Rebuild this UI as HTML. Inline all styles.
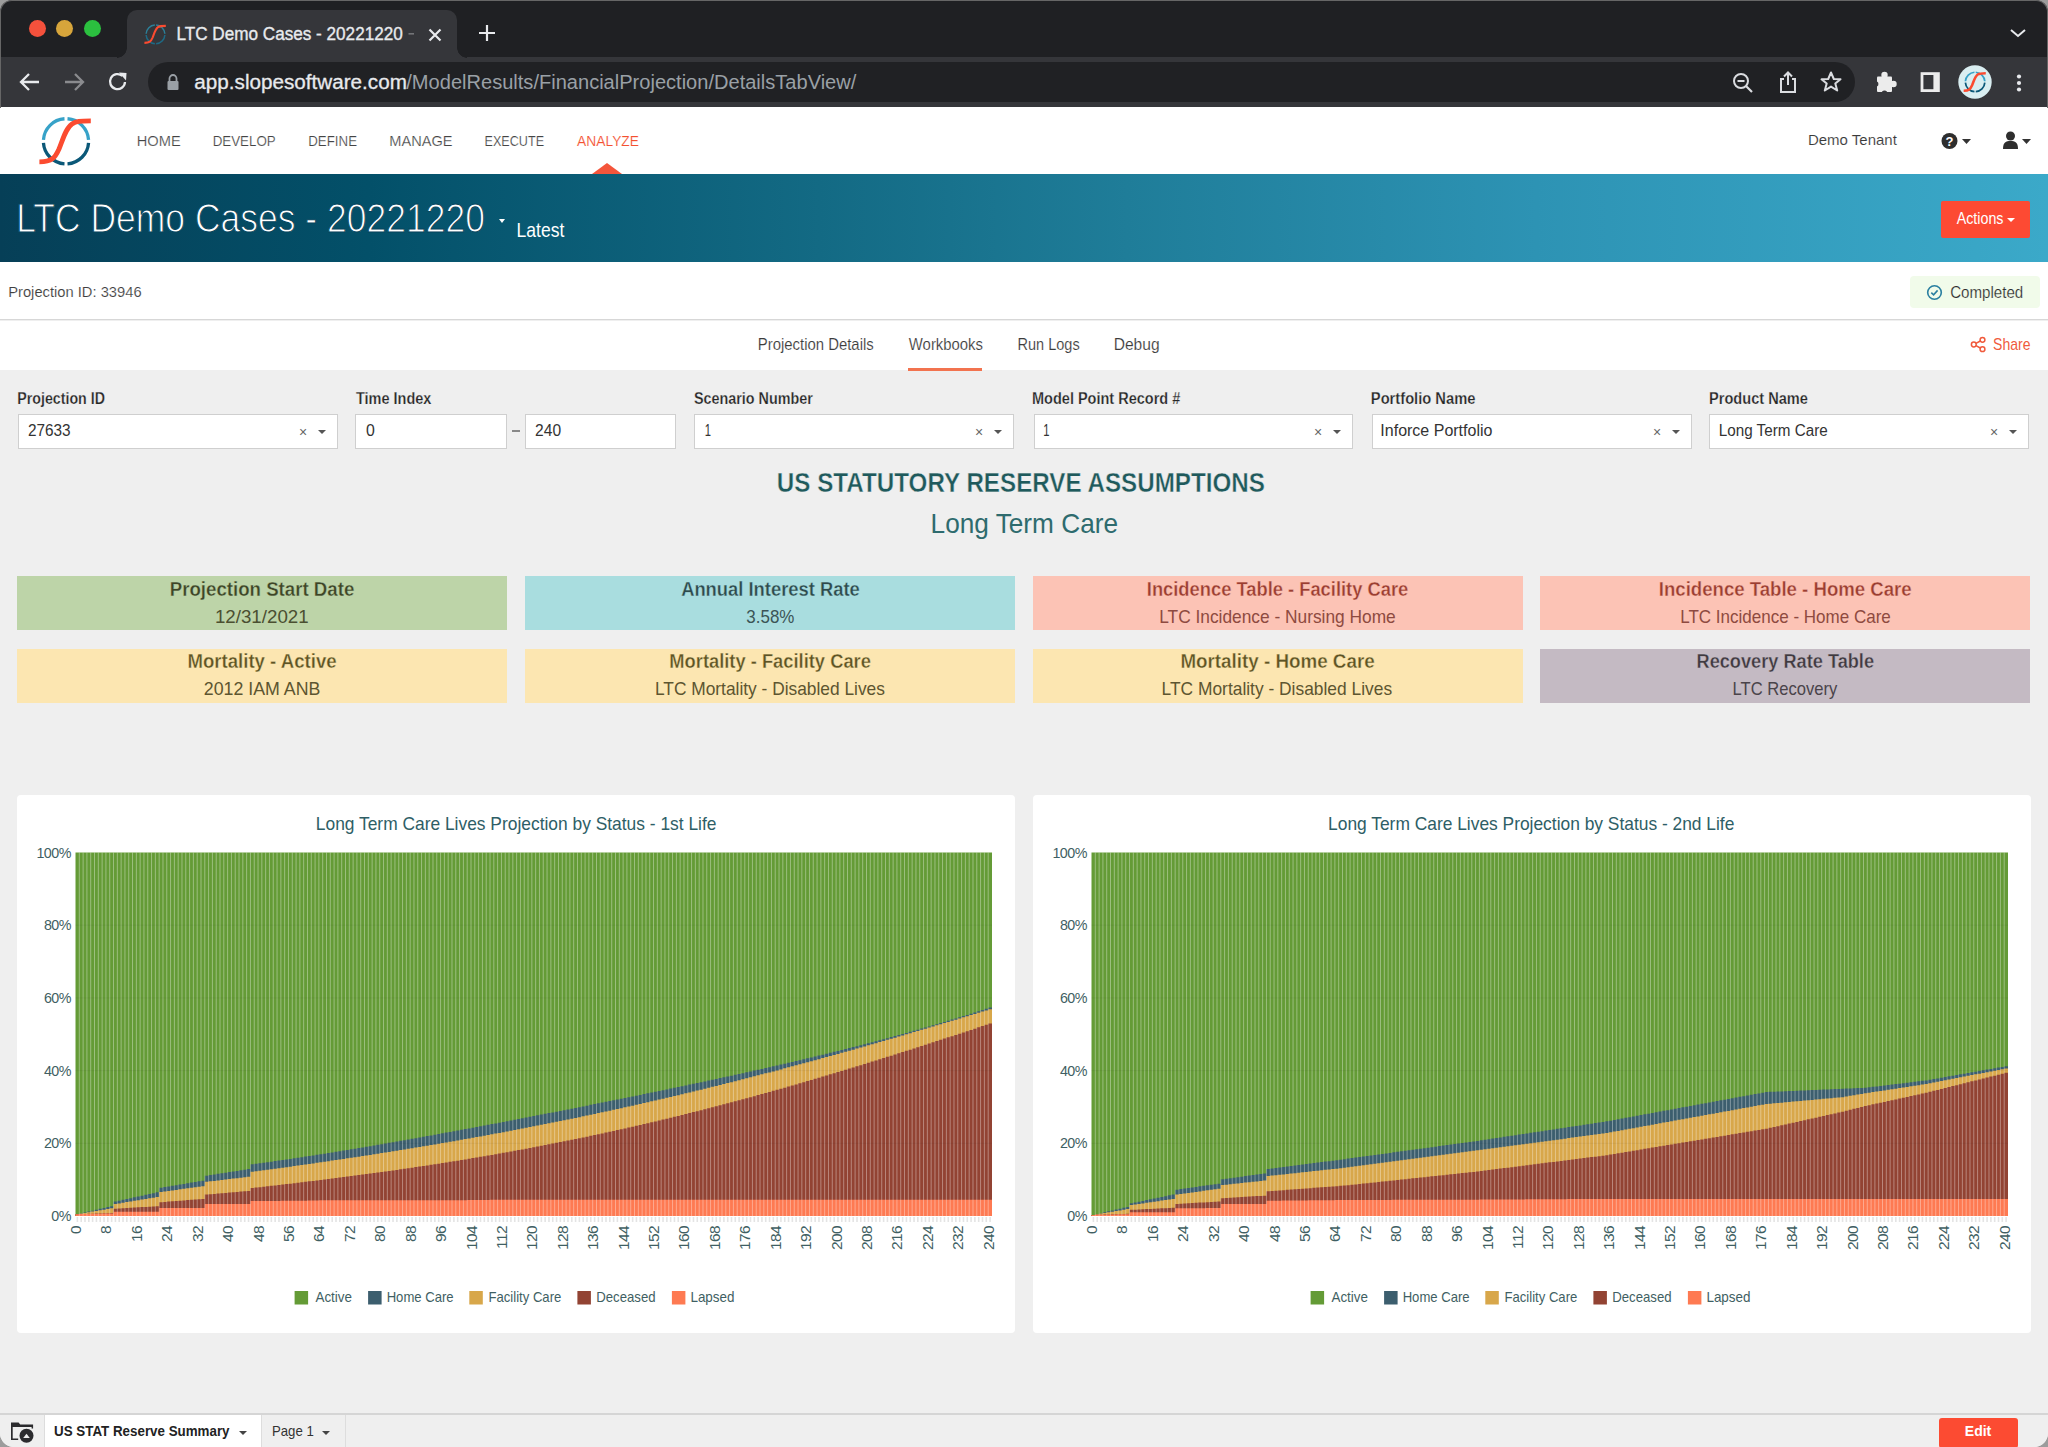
<!DOCTYPE html>
<html><head><meta charset="utf-8">
<style>
*{box-sizing:border-box;margin:0;padding:0}
html,body{width:2048px;height:1447px;overflow:hidden;background:#9c9c9c;font-family:"Liberation Sans",sans-serif}
.abs{position:absolute}
#win{position:absolute;left:0;top:0;width:2048px;height:1447px;border-radius:12px 12px 14px 14px;overflow:hidden;background:#efefef}
#frame{position:absolute;left:0;top:0;width:2048px;height:108px;border-radius:12px 12px 0 0;border:1px solid #666;border-bottom:none;pointer-events:none}
#tabstrip{position:absolute;left:0;top:0;width:2048px;height:57px;background:#1f2023}
#toolbar{position:absolute;left:0;top:57px;width:2048px;height:50px;background:#35363a}
.light{position:absolute;width:17px;height:17px;border-radius:50%;top:20px}
#tab{position:absolute;left:127px;top:10px;width:330px;height:48px;background:#35363a;border-radius:10px 10px 0 0}
#tab:before,#tab:after{content:"";position:absolute;bottom:0;width:10px;height:10px;background:radial-gradient(circle at 0 0,#1f2023 10px,#35363a 10.5px)}
#tab:before{left:-10px;background:radial-gradient(circle at 0 0,#1f2023 9.5px,#35363a 10px)}
#tab:after{right:-10px;background:radial-gradient(circle at 100% 0,#1f2023 9.5px,#35363a 10px)}
.tabtitle{position:absolute;left:50px;top:13px;font-size:17.5px;color:#e8eaed;white-space:nowrap;width:245px;overflow:hidden;-webkit-mask-image:linear-gradient(90deg,#000 85%,transparent 100%)}
#omni{position:absolute;left:148px;top:62px;width:1707px;height:40px;border-radius:20px;background:#202124}
.url{position:absolute;left:194px;top:70px;font-size:19.5px;color:#e8eaed;white-space:nowrap}
.url span{color:#9aa0a6}
#nav{position:absolute;left:0;top:107px;width:2048px;height:67px;background:#fff}
.navi{position:absolute;top:132px;font-size:15px;color:#4a4a4a;white-space:nowrap}
#banner{position:absolute;left:0;top:174px;width:2048px;height:88px;background:linear-gradient(90deg,#063f57 0%,#035069 18%,#136a84 40%,#1f7d99 55%,#2d93b4 75%,#3ba9c9 100%)}
#projrow{position:absolute;left:0;top:262px;width:2048px;height:58px;background:#fff;border-bottom:1px solid #d7d7d7}
#tabsrow{position:absolute;left:0;top:321px;width:2048px;height:49px;background:#fff}
.tabi{position:absolute;top:335px;font-size:15px;color:#404040;white-space:nowrap}
.flabel{position:absolute;top:389px;font-size:15px;font-weight:bold;color:#262626;white-space:nowrap;letter-spacing:-0.2px}
.finput{position:absolute;top:414px;height:35px;background:#fff;border:1px solid #cfcfcf;font-size:14px;color:#333;padding:9px 0 0 10px;white-space:nowrap}
.fx{position:absolute;top:9px;font-size:14px;color:#666}
.fcar{position:absolute;top:15px;width:0;height:0;border-left:4px solid transparent;border-right:4px solid transparent;border-top:4px solid #555}
.card{position:absolute;height:54px;text-align:center}
.card .t{position:absolute;left:0;right:0;top:3px;font-size:19.5px;font-weight:bold;white-space:nowrap;letter-spacing:-0.3px}
.card .v{position:absolute;left:0;right:0;top:31px;font-size:17px;white-space:nowrap}
.panel{position:absolute;top:795px;width:998px;height:538px;background:#fff;border-radius:4px}
#bottombar{position:absolute;left:0;top:1413px;width:2048px;height:34px;background:#efefef;border-top:2px solid #d5d5d5}
</style></head><body>
<div id="win">
  <div id="tabstrip"></div>
  <div id="toolbar"></div>
  <div class="light" style="left:29px;background:#f5513c"></div>
  <div class="light" style="left:56px;background:#d7a53b"></div>
  <div class="light" style="left:83.5px;background:#2bc03f"></div>
  <div id="tab">
    <svg class="abs" style="left:16px;top:12.5px" width="25" height="23.3" viewBox="0 0 60 56"><g fill="none" stroke-width="3.6"><path d="M7.45 25.80 A22.6 22.6 0 0 1 28.50 4.75" stroke="#2c7f98"/><path d="M31.50 4.75 A22.6 22.6 0 0 1 52.55 25.80" stroke="#2c7f98"/><path d="M52.55 28.80 A22.6 22.6 0 0 1 31.50 49.85" stroke="#1d6a85"/><path d="M28.50 49.85 A22.6 22.6 0 0 1 7.45 28.80" stroke="#1d6a85"/></g><path d="M3.4 47.8 C16 47.8 19 44 23 35 C27 25 30 14 36 10 C40 7.3 44 6.9 54.8 6.9" stroke="#fb4b30" stroke-width="5" fill="none"/></svg>
    
    <svg class="abs" style="left:300px;top:17px" width="16" height="16" viewBox="0 0 16 16"><path d="M2.5 2.5 L13.5 13.5 M13.5 2.5 L2.5 13.5" stroke="#e8eaed" stroke-width="2.2"/></svg>
  </div>
  <svg class="abs" style="left:477px;top:23px" width="20" height="20" viewBox="0 0 20 20"><path d="M10 2 V18 M2 10 H18" stroke="#e8eaed" stroke-width="2.2"/></svg>
  <svg class="abs" style="left:2009px;top:27px" width="18" height="12" viewBox="0 0 18 12"><path d="M2 3 L9 9 L16 3" stroke="#e8eaed" stroke-width="2" fill="none"/></svg>
  <!-- toolbar icons -->
  <svg class="abs" style="left:18px;top:71px" width="24" height="22" viewBox="0 0 24 22"><path d="M21 11 H4 M11 3 L3 11 L11 19" stroke="#e8eaed" stroke-width="2.3" fill="none"/></svg>
  <svg class="abs" style="left:62px;top:71px" width="24" height="22" viewBox="0 0 24 22"><path d="M3 11 H20 M13 3 L21 11 L13 19" stroke="#8a8b8e" stroke-width="2.3" fill="none"/></svg>
  <svg class="abs" style="left:106px;top:70px" width="24" height="24" viewBox="0 0 24 24"><path d="M19 12 A7.5 7.5 0 1 1 16.5 6" stroke="#e8eaed" stroke-width="2.3" fill="none"/><path d="M13 2.5 L20.5 3 L20 10.5 Z" fill="#e8eaed"/></svg>
  <div id="omni"></div>
  <svg class="abs" style="left:166px;top:73px" width="14" height="18" viewBox="0 0 14 18"><path d="M3.5 8 V5.5 A3.5 3.5 0 0 1 10.5 5.5 V8" stroke="#9aa0a6" stroke-width="1.8" fill="none"/><rect x="1.5" y="8" width="11" height="9" rx="1" fill="#9aa0a6"/></svg>
  
  <!-- omnibox right icons -->
  <svg class="abs" style="left:1731px;top:71px" width="24" height="24" viewBox="0 0 24 24"><circle cx="10" cy="10" r="7" stroke="#dadce0" stroke-width="2" fill="none"/><path d="M6.5 10 H13.5 M15 15 L21 21" stroke="#dadce0" stroke-width="2.2"/></svg>
  <svg class="abs" style="left:1777px;top:70px" width="22" height="24" viewBox="0 0 22 24"><path d="M7 9 H4 V22 H18 V9 H15 M11 15 V3 M7 6.5 L11 2.5 L15 6.5" stroke="#dadce0" stroke-width="2" fill="none"/></svg>
  <svg class="abs" style="left:1819px;top:70px" width="24" height="24" viewBox="0 0 24 24"><path d="M12 2.5 L14.8 9 L21.5 9.3 L16.3 13.6 L18.2 20.5 L12 16.6 L5.8 20.5 L7.7 13.6 L2.5 9.3 L9.2 9 Z" stroke="#dadce0" stroke-width="2" fill="none" stroke-linejoin="round"/></svg>
  <svg class="abs" style="left:1874px;top:70px" width="24" height="24" viewBox="0 0 24 24"><rect x="3" y="6.5" width="15" height="15.5" rx="1" fill="#ececec"/><circle cx="10.5" cy="5" r="3.2" fill="#ececec"/><circle cx="19.5" cy="14" r="3.2" fill="#ececec"/><circle cx="10.5" cy="23.3" r="2.8" fill="#35363a"/><circle cx="1.6" cy="14" r="2.8" fill="#35363a"/></svg>
  <svg class="abs" style="left:1919px;top:71px" width="22" height="22" viewBox="0 0 22 22"><rect x="1.6" y="1.2" width="19.2" height="19.8" fill="#ececec"/><rect x="4.4" y="4" width="10" height="14.2" fill="#35363a"/></svg>
  <svg class="abs" style="left:1958px;top:65px" width="34" height="34" viewBox="0 0 34 34"><circle cx="17" cy="17" r="16.7" fill="#d9eef1"/><g transform="translate(4.2,5.2) scale(0.43)"><g fill="none" stroke-width="4"><path d="M7.45 25.80 A22.6 22.6 0 0 1 28.50 4.75" stroke="#37a2c8"/><path d="M31.50 4.75 A22.6 22.6 0 0 1 52.55 25.80" stroke="#37a2c8"/><path d="M52.55 28.80 A22.6 22.6 0 0 1 31.50 49.85" stroke="#0b5878"/><path d="M28.50 49.85 A22.6 22.6 0 0 1 7.45 28.80" stroke="#0b5878"/></g><path d="M3.4 47.8 C16 47.8 19 44 23 35 C27 25 30 14 36 10 C40 7.3 44 6.9 54.8 6.9" stroke="#fb4b30" stroke-width="6" fill="none"/></g></svg>
  <svg class="abs" style="left:2014px;top:72px" width="10" height="22" viewBox="0 0 10 22"><circle cx="5" cy="4.5" r="2.1" fill="#e8eaed"/><circle cx="5" cy="11" r="2.1" fill="#e8eaed"/><circle cx="5" cy="17.5" r="2.1" fill="#e8eaed"/></svg>

  <!-- NAV -->
  <div id="nav"></div>
  <svg class="abs" style="left:36px;top:114px" width="60" height="56" viewBox="0 0 60 56"><g fill="none" stroke-width="3.3"><path d="M7.45 25.80 A22.6 22.6 0 0 1 28.50 4.75" stroke="#37a2c8"/><path d="M31.50 4.75 A22.6 22.6 0 0 1 52.55 25.80" stroke="#37a2c8"/><path d="M52.55 28.80 A22.6 22.6 0 0 1 31.50 49.85" stroke="#0b5878"/><path d="M28.50 49.85 A22.6 22.6 0 0 1 7.45 28.80" stroke="#0b5878"/></g><path d="M3.4 47.8 C16 47.8 19 44 23 35 C27 25 30 14 36 10 C40 7.3 44 6.9 54.8 6.9" stroke="#fb4b30" stroke-width="4.8" fill="none"/></svg>
  
  
  
  
  
  
  <div class="abs" style="left:592px;top:163px;width:0;height:0;border-left:15px solid transparent;border-right:15px solid transparent;border-bottom:11px solid #f4553b"></div>
  
  <svg class="abs" style="left:1941px;top:132px" width="32" height="18" viewBox="0 0 32 18"><circle cx="8.5" cy="9" r="8" fill="#2e2e2e"/><text x="8.5" y="13.8" font-size="13" font-weight="bold" fill="#fff" text-anchor="middle" font-family="Liberation Sans">?</text><path d="M21 7 H30 L25.5 12 Z" fill="#333"/></svg>
  <svg class="abs" style="left:2002px;top:131px" width="32" height="19" viewBox="0 0 32 19"><circle cx="8.5" cy="5" r="4.5" fill="#2e2e2e"/><path d="M1 18 C1 11 4 10 8.5 10 C13 10 16 11 16 18 Z" fill="#2e2e2e"/><path d="M20 8 H29 L24.5 13 Z" fill="#333"/></svg>

  <!-- BANNER -->
  <div id="banner"></div>
  
  <div class="abs" style="left:498.5px;top:219px;width:0;height:0;border-left:3.5px solid transparent;border-right:3.5px solid transparent;border-top:4px solid #fff"></div>
  
  <div class="abs" style="left:1941px;top:200.5px;width:89px;height:37px;background:#fd4a33;border-radius:2px"></div>
  
  <div class="abs" style="left:2007px;top:218px;width:0;height:0;border-left:4px solid transparent;border-right:4px solid transparent;border-top:4px solid #fff"></div>

  <!-- PROJECTION ROW -->
  <div id="projrow"></div>
  
  <div class="abs" style="left:1909.5px;top:275.5px;width:130.5px;height:32px;background:#f1fbea;border-radius:4px"></div>
  <svg class="abs" style="left:1926px;top:284px" width="17" height="17" viewBox="0 0 17 17"><circle cx="8.5" cy="8.5" r="6.8" stroke="#2a7fa0" stroke-width="1.6" fill="none"/><path d="M5.3 8.6 L7.6 10.8 L11.6 6.4" stroke="#2a7fa0" stroke-width="1.6" fill="none"/></svg>
  

  <!-- TABS -->
  <div id="tabsrow"></div>
  
  
  
  
  <div class="abs" style="left:908px;top:368px;width:74px;height:2.5px;background:#f2734f"></div>
  <svg class="abs" style="left:1970px;top:336px" width="17" height="17" viewBox="0 0 17 17"><g stroke="#f05a3c" stroke-width="1.5" fill="none"><circle cx="12.5" cy="3.8" r="2.4"/><circle cx="3.8" cy="8.5" r="2.4"/><circle cx="12.5" cy="13.2" r="2.4"/><path d="M6 7.3 L10.3 5 M6 9.7 L10.3 12"/></g></svg>
  

  <!-- FILTERS -->
  <div class="finput" style="left:18px;width:320px"><span class="fx" style="left:280px">&#215;</span><span class="fcar" style="left:299px"></span></div>
  <div class="finput" style="left:694px;width:320px"><span class="fx" style="left:280px">&#215;</span><span class="fcar" style="left:299px"></span></div>
  <div class="finput" style="left:1034px;width:319px"><span class="fx" style="left:279px">&#215;</span><span class="fcar" style="left:298px"></span></div>
  <div class="finput" style="left:1372px;width:320px"><span class="fx" style="left:280px">&#215;</span><span class="fcar" style="left:299px"></span></div>
  <div class="finput" style="left:1709px;width:320px"><span class="fx" style="left:280px">&#215;</span><span class="fcar" style="left:299px"></span></div>
  <div class="finput" style="left:355px;width:152px"></div>
  <div class="abs" style="left:512px;top:430px;width:8px;height:1.5px;background:#888"></div>
  <div class="finput" style="left:525px;width:151px"></div>

  <!-- HEADINGS -->
  
  

  <!-- CARDS -->
  <div class="card" style="left:17px;top:576px;width:490px;background:#bdd4a8"></div>
  <div class="card" style="left:525px;top:576px;width:490px;background:#a9dddf"></div>
  <div class="card" style="left:1033px;top:576px;width:490px;background:#fcc3b5"></div>
  <div class="card" style="left:1540px;top:576px;width:490px;background:#fcc3b5"></div>
  <div class="card" style="left:17px;top:648.5px;width:490px;background:#fce6b1"></div>
  <div class="card" style="left:525px;top:648.5px;width:490px;background:#fce6b1"></div>
  <div class="card" style="left:1033px;top:648.5px;width:490px;background:#fce6b1"></div>
  <div class="card" style="left:1540px;top:648.5px;width:490px;background:#c4bac3"></div>

  <!-- CHARTS -->
  <div class="panel" style="left:17px"></div>
  <div class="panel" style="left:1033px"></div>
  <svg class="abs" style="left:17px;top:795px" width="998" height="538" viewBox="17 795 998 538">
<rect x="75.5" y="852.5" width="916.5" height="363.5" fill="#649b36"/>
<polygon fill="#3c5e6e" points="75.50,1214.18 79.30,1214.18 79.30,1213.29 83.11,1213.29 83.11,1212.41 86.91,1212.41 86.91,1211.52 90.71,1211.52 90.71,1210.63 94.51,1210.63 94.51,1209.74 98.32,1209.74 98.32,1208.85 102.12,1208.85 102.12,1207.96 105.92,1207.96 105.92,1207.07 109.73,1207.07 109.73,1206.19 113.53,1206.19 113.53,1201.46 117.33,1201.46 117.33,1200.63 121.13,1200.63 121.13,1199.81 124.94,1199.81 124.94,1198.98 128.74,1198.98 128.74,1198.16 132.54,1198.16 132.54,1197.33 136.35,1197.33 136.35,1196.50 140.15,1196.50 140.15,1195.68 143.95,1195.68 143.95,1194.85 147.76,1194.85 147.76,1194.02 151.56,1194.02 151.56,1193.20 155.36,1193.20 155.36,1192.37 159.16,1192.37 159.16,1187.65 162.97,1187.65 162.97,1187.02 166.77,1187.02 166.77,1186.39 170.57,1186.39 170.57,1185.76 174.38,1185.76 174.38,1185.14 178.18,1185.14 178.18,1184.51 181.98,1184.51 181.98,1183.88 185.78,1183.88 185.78,1183.25 189.59,1183.25 189.59,1182.62 193.39,1182.62 193.39,1182.00 197.19,1182.00 197.19,1181.37 201.00,1181.37 201.00,1180.74 204.80,1180.74 204.80,1175.65 208.60,1175.65 208.60,1175.06 212.40,1175.06 212.40,1174.46 216.21,1174.46 216.21,1173.87 220.01,1173.87 220.01,1173.27 223.81,1173.27 223.81,1172.68 227.62,1172.68 227.62,1172.08 231.42,1172.08 231.42,1171.49 235.22,1171.49 235.22,1170.89 239.02,1170.89 239.02,1170.30 242.83,1170.30 242.83,1169.70 246.63,1169.70 246.63,1169.11 250.43,1169.11 250.43,1164.24 254.24,1164.24 254.24,1163.73 258.04,1163.73 258.04,1163.22 261.84,1163.22 261.84,1162.69 265.65,1162.69 265.65,1162.17 269.45,1162.17 269.45,1161.64 273.25,1161.64 273.25,1161.10 277.05,1161.10 277.05,1160.55 280.86,1160.55 280.86,1160.01 284.66,1160.01 284.66,1159.45 288.46,1159.45 288.46,1158.89 292.27,1158.89 292.27,1158.33 296.07,1158.33 296.07,1157.76 299.87,1157.76 299.87,1157.19 303.67,1157.19 303.67,1156.61 307.48,1156.61 307.48,1156.02 311.28,1156.02 311.28,1155.43 315.08,1155.43 315.08,1154.84 318.89,1154.84 318.89,1154.24 322.69,1154.24 322.69,1153.64 326.49,1153.64 326.49,1153.04 330.29,1153.04 330.29,1152.43 334.10,1152.43 334.10,1151.81 337.90,1151.81 337.90,1151.20 341.70,1151.20 341.70,1150.58 345.51,1150.58 345.51,1149.95 349.31,1149.95 349.31,1149.32 353.11,1149.32 353.11,1148.69 356.91,1148.69 356.91,1148.05 360.72,1148.05 360.72,1147.41 364.52,1147.41 364.52,1146.77 368.32,1146.77 368.32,1146.13 372.13,1146.13 372.13,1145.48 375.93,1145.48 375.93,1144.82 379.73,1144.82 379.73,1144.17 383.54,1144.17 383.54,1143.51 387.34,1143.51 387.34,1142.85 391.14,1142.85 391.14,1142.18 394.94,1142.18 394.94,1141.52 398.75,1141.52 398.75,1140.85 402.55,1140.85 402.55,1140.18 406.35,1140.18 406.35,1139.50 410.16,1139.50 410.16,1138.82 413.96,1138.82 413.96,1138.14 417.76,1138.14 417.76,1137.46 421.56,1137.46 421.56,1136.78 425.37,1136.78 425.37,1136.09 429.17,1136.09 429.17,1135.40 432.97,1135.40 432.97,1134.71 436.78,1134.71 436.78,1134.01 440.58,1134.01 440.58,1133.32 444.38,1133.32 444.38,1132.62 448.18,1132.62 448.18,1131.92 451.99,1131.92 451.99,1131.22 455.79,1131.22 455.79,1130.51 459.59,1130.51 459.59,1129.81 463.40,1129.81 463.40,1129.10 467.20,1129.10 467.20,1128.39 471.00,1128.39 471.00,1127.68 474.80,1127.68 474.80,1126.97 478.61,1126.97 478.61,1126.25 482.41,1126.25 482.41,1125.54 486.21,1125.54 486.21,1124.82 490.02,1124.82 490.02,1124.10 493.82,1124.10 493.82,1123.38 497.62,1123.38 497.62,1122.65 501.43,1122.65 501.43,1121.93 505.23,1121.93 505.23,1121.20 509.03,1121.20 509.03,1120.48 512.83,1120.48 512.83,1119.75 516.64,1119.75 516.64,1119.02 520.44,1119.02 520.44,1118.29 524.24,1118.29 524.24,1117.55 528.05,1117.55 528.05,1116.82 531.85,1116.82 531.85,1116.08 535.65,1116.08 535.65,1115.34 539.45,1115.34 539.45,1114.60 543.26,1114.60 543.26,1113.86 547.06,1113.86 547.06,1113.12 550.86,1113.12 550.86,1112.38 554.67,1112.38 554.67,1111.63 558.47,1111.63 558.47,1110.89 562.27,1110.89 562.27,1110.14 566.07,1110.14 566.07,1109.39 569.88,1109.39 569.88,1108.64 573.68,1108.64 573.68,1107.89 577.48,1107.89 577.48,1107.14 581.29,1107.14 581.29,1106.38 585.09,1106.38 585.09,1105.63 588.89,1105.63 588.89,1104.87 592.70,1104.87 592.70,1104.11 596.50,1104.11 596.50,1103.35 600.30,1103.35 600.30,1102.59 604.10,1102.59 604.10,1101.83 607.91,1101.83 607.91,1101.07 611.71,1101.07 611.71,1100.30 615.51,1100.30 615.51,1099.53 619.32,1099.53 619.32,1098.76 623.12,1098.76 623.12,1097.99 626.92,1097.99 626.92,1097.22 630.72,1097.22 630.72,1096.45 634.53,1096.45 634.53,1095.67 638.33,1095.67 638.33,1094.90 642.13,1094.90 642.13,1094.12 645.94,1094.12 645.94,1093.34 649.74,1093.34 649.74,1092.55 653.54,1092.55 653.54,1091.77 657.34,1091.77 657.34,1090.98 661.15,1090.98 661.15,1090.20 664.95,1090.20 664.95,1089.41 668.75,1089.41 668.75,1088.61 672.56,1088.61 672.56,1087.82 676.36,1087.82 676.36,1087.03 680.16,1087.03 680.16,1086.23 683.96,1086.23 683.96,1085.43 687.77,1085.43 687.77,1084.62 691.57,1084.62 691.57,1083.82 695.37,1083.82 695.37,1083.01 699.18,1083.01 699.18,1082.20 702.98,1082.20 702.98,1081.39 706.78,1081.39 706.78,1080.58 710.59,1080.58 710.59,1079.76 714.39,1079.76 714.39,1078.94 718.19,1078.94 718.19,1078.12 721.99,1078.12 721.99,1077.30 725.80,1077.30 725.80,1076.47 729.60,1076.47 729.60,1075.64 733.40,1075.64 733.40,1074.81 737.21,1074.81 737.21,1073.97 741.01,1073.97 741.01,1073.13 744.81,1073.13 744.81,1072.29 748.61,1072.29 748.61,1071.44 752.42,1071.44 752.42,1070.59 756.22,1070.59 756.22,1069.74 760.02,1069.74 760.02,1068.89 763.83,1068.89 763.83,1068.03 767.63,1068.03 767.63,1067.17 771.43,1067.17 771.43,1066.30 775.23,1066.30 775.23,1065.43 779.04,1065.43 779.04,1064.56 782.84,1064.56 782.84,1063.68 786.64,1063.68 786.64,1062.80 790.45,1062.80 790.45,1061.91 794.25,1061.91 794.25,1061.02 798.05,1061.02 798.05,1060.13 801.85,1060.13 801.85,1059.23 805.66,1059.23 805.66,1058.32 809.46,1058.32 809.46,1057.42 813.26,1057.42 813.26,1056.50 817.07,1056.50 817.07,1055.59 820.87,1055.59 820.87,1054.67 824.67,1054.67 824.67,1053.74 828.48,1053.74 828.48,1052.81 832.28,1052.81 832.28,1051.87 836.08,1051.87 836.08,1050.93 839.88,1050.93 839.88,1049.98 843.69,1049.98 843.69,1049.03 847.49,1049.03 847.49,1048.07 851.29,1048.07 851.29,1047.10 855.10,1047.10 855.10,1046.13 858.90,1046.13 858.90,1045.16 862.70,1045.16 862.70,1044.17 866.50,1044.17 866.50,1043.18 870.31,1043.18 870.31,1042.19 874.11,1042.19 874.11,1041.19 877.91,1041.19 877.91,1040.18 881.72,1040.18 881.72,1039.17 885.52,1039.17 885.52,1038.14 889.32,1038.14 889.32,1037.12 893.12,1037.12 893.12,1036.08 896.93,1036.08 896.93,1035.04 900.73,1035.04 900.73,1033.99 904.53,1033.99 904.53,1032.93 908.34,1032.93 908.34,1031.87 912.14,1031.87 912.14,1030.79 915.94,1030.79 915.94,1029.71 919.74,1029.71 919.74,1028.62 923.55,1028.62 923.55,1027.53 927.35,1027.53 927.35,1026.42 931.15,1026.42 931.15,1025.31 934.96,1025.31 934.96,1024.19 938.76,1024.19 938.76,1023.06 942.56,1023.06 942.56,1021.92 946.37,1021.92 946.37,1020.77 950.17,1020.77 950.17,1019.61 953.97,1019.61 953.97,1018.44 957.77,1018.44 957.77,1017.26 961.58,1017.26 961.58,1016.08 965.38,1016.08 965.38,1014.88 969.18,1014.88 969.18,1013.68 972.99,1013.68 972.99,1012.46 976.79,1012.46 976.79,1011.23 980.59,1011.23 980.59,1010.00 984.39,1010.00 984.39,1008.75 988.20,1008.75 988.20,1007.49 992.00,1007.49 992.00,1216.00 75.50,1216.00"/>
<polygon fill="#d8a74a" points="75.50,1214.18 79.30,1214.18 79.30,1213.54 83.11,1213.54 83.11,1212.89 86.91,1212.89 86.91,1212.24 90.71,1212.24 90.71,1211.60 94.51,1211.60 94.51,1210.95 98.32,1210.95 98.32,1210.31 102.12,1210.31 102.12,1209.66 105.92,1209.66 105.92,1209.01 109.73,1209.01 109.73,1208.37 113.53,1208.37 113.53,1204.00 117.33,1204.00 117.33,1203.38 121.13,1203.38 121.13,1202.75 124.94,1202.75 124.94,1202.12 128.74,1202.12 128.74,1201.49 132.54,1201.49 132.54,1200.87 136.35,1200.87 136.35,1200.24 140.15,1200.24 140.15,1199.61 143.95,1199.61 143.95,1198.98 147.76,1198.98 147.76,1198.35 151.56,1198.35 151.56,1197.73 155.36,1197.73 155.36,1197.10 159.16,1197.10 159.16,1192.01 162.97,1192.01 162.97,1191.48 166.77,1191.48 166.77,1190.95 170.57,1190.95 170.57,1190.42 174.38,1190.42 174.38,1189.89 178.18,1189.89 178.18,1189.37 181.98,1189.37 181.98,1188.84 185.78,1188.84 185.78,1188.31 189.59,1188.31 189.59,1187.78 193.39,1187.78 193.39,1187.25 197.19,1187.25 197.19,1186.72 201.00,1186.72 201.00,1186.19 204.80,1186.19 204.80,1181.83 208.60,1181.83 208.60,1181.37 212.40,1181.37 212.40,1180.91 216.21,1180.91 216.21,1180.44 220.01,1180.44 220.01,1179.98 223.81,1179.98 223.81,1179.52 227.62,1179.52 227.62,1179.06 231.42,1179.06 231.42,1178.59 235.22,1178.59 235.22,1178.13 239.02,1178.13 239.02,1177.67 242.83,1177.67 242.83,1177.20 246.63,1177.20 246.63,1176.74 250.43,1176.74 250.43,1171.85 254.24,1171.85 254.24,1171.33 258.04,1171.33 258.04,1170.82 261.84,1170.82 261.84,1170.30 265.65,1170.30 265.65,1169.78 269.45,1169.78 269.45,1169.26 273.25,1169.26 273.25,1168.74 277.05,1168.74 277.05,1168.21 280.86,1168.21 280.86,1167.69 284.66,1167.69 284.66,1167.16 288.46,1167.16 288.46,1166.63 292.27,1166.63 292.27,1166.09 296.07,1166.09 296.07,1165.56 299.87,1165.56 299.87,1165.02 303.67,1165.02 303.67,1164.48 307.48,1164.48 307.48,1163.93 311.28,1163.93 311.28,1163.39 315.08,1163.39 315.08,1162.84 318.89,1162.84 318.89,1162.29 322.69,1162.29 322.69,1161.74 326.49,1161.74 326.49,1161.18 330.29,1161.18 330.29,1160.62 334.10,1160.62 334.10,1160.06 337.90,1160.06 337.90,1159.50 341.70,1159.50 341.70,1158.93 345.51,1158.93 345.51,1158.36 349.31,1158.36 349.31,1157.79 353.11,1157.79 353.11,1157.21 356.91,1157.21 356.91,1156.63 360.72,1156.63 360.72,1156.05 364.52,1156.05 364.52,1155.47 368.32,1155.47 368.32,1154.88 372.13,1154.88 372.13,1154.29 375.93,1154.29 375.93,1153.69 379.73,1153.69 379.73,1153.10 383.54,1153.10 383.54,1152.50 387.34,1152.50 387.34,1151.89 391.14,1151.89 391.14,1151.29 394.94,1151.29 394.94,1150.68 398.75,1150.68 398.75,1150.07 402.55,1150.07 402.55,1149.45 406.35,1149.45 406.35,1148.83 410.16,1148.83 410.16,1148.21 413.96,1148.21 413.96,1147.58 417.76,1147.58 417.76,1146.95 421.56,1146.95 421.56,1146.32 425.37,1146.32 425.37,1145.68 429.17,1145.68 429.17,1145.04 432.97,1145.04 432.97,1144.40 436.78,1144.40 436.78,1143.75 440.58,1143.75 440.58,1143.10 444.38,1143.10 444.38,1142.45 448.18,1142.45 448.18,1141.79 451.99,1141.79 451.99,1141.13 455.79,1141.13 455.79,1140.46 459.59,1140.46 459.59,1139.79 463.40,1139.79 463.40,1139.12 467.20,1139.12 467.20,1138.44 471.00,1138.44 471.00,1137.76 474.80,1137.76 474.80,1137.08 478.61,1137.08 478.61,1136.39 482.41,1136.39 482.41,1135.70 486.21,1135.70 486.21,1135.01 490.02,1135.01 490.02,1134.31 493.82,1134.31 493.82,1133.60 497.62,1133.60 497.62,1132.90 501.43,1132.90 501.43,1132.19 505.23,1132.19 505.23,1131.47 509.03,1131.47 509.03,1130.75 512.83,1130.75 512.83,1130.03 516.64,1130.03 516.64,1129.30 520.44,1129.30 520.44,1128.57 524.24,1128.57 524.24,1127.84 528.05,1127.84 528.05,1127.10 531.85,1127.10 531.85,1126.36 535.65,1126.36 535.65,1125.61 539.45,1125.61 539.45,1124.86 543.26,1124.86 543.26,1124.11 547.06,1124.11 547.06,1123.35 550.86,1123.35 550.86,1122.59 554.67,1122.59 554.67,1121.82 558.47,1121.82 558.47,1121.05 562.27,1121.05 562.27,1120.28 566.07,1120.28 566.07,1119.50 569.88,1119.50 569.88,1118.71 573.68,1118.71 573.68,1117.93 577.48,1117.93 577.48,1117.14 581.29,1117.14 581.29,1116.34 585.09,1116.34 585.09,1115.54 588.89,1115.54 588.89,1114.74 592.70,1114.74 592.70,1113.93 596.50,1113.93 596.50,1113.12 600.30,1113.12 600.30,1112.30 604.10,1112.30 604.10,1111.48 607.91,1111.48 607.91,1110.66 611.71,1110.66 611.71,1109.83 615.51,1109.83 615.51,1109.00 619.32,1109.00 619.32,1108.16 623.12,1108.16 623.12,1107.32 626.92,1107.32 626.92,1106.48 630.72,1106.48 630.72,1105.63 634.53,1105.63 634.53,1104.78 638.33,1104.78 638.33,1103.92 642.13,1103.92 642.13,1103.06 645.94,1103.06 645.94,1102.19 649.74,1102.19 649.74,1101.33 653.54,1101.33 653.54,1100.45 657.34,1100.45 657.34,1099.57 661.15,1099.57 661.15,1098.69 664.95,1098.69 664.95,1097.81 668.75,1097.81 668.75,1096.92 672.56,1096.92 672.56,1096.02 676.36,1096.02 676.36,1095.13 680.16,1095.13 680.16,1094.22 683.96,1094.22 683.96,1093.32 687.77,1093.32 687.77,1092.41 691.57,1092.41 691.57,1091.49 695.37,1091.49 695.37,1090.57 699.18,1090.57 699.18,1089.65 702.98,1089.65 702.98,1088.73 706.78,1088.73 706.78,1087.80 710.59,1087.80 710.59,1086.86 714.39,1086.86 714.39,1085.92 718.19,1085.92 718.19,1084.98 721.99,1084.98 721.99,1084.03 725.80,1084.03 725.80,1083.08 729.60,1083.08 729.60,1082.13 733.40,1082.13 733.40,1081.17 737.21,1081.17 737.21,1080.21 741.01,1080.21 741.01,1079.24 744.81,1079.24 744.81,1078.27 748.61,1078.27 748.61,1077.30 752.42,1077.30 752.42,1076.32 756.22,1076.32 756.22,1075.34 760.02,1075.34 760.02,1074.36 763.83,1074.36 763.83,1073.37 767.63,1073.37 767.63,1072.38 771.43,1072.38 771.43,1071.38 775.23,1071.38 775.23,1070.38 779.04,1070.38 779.04,1069.38 782.84,1069.38 782.84,1068.37 786.64,1068.37 786.64,1067.36 790.45,1067.36 790.45,1066.34 794.25,1066.34 794.25,1065.32 798.05,1065.32 798.05,1064.30 801.85,1064.30 801.85,1063.28 805.66,1063.28 805.66,1062.25 809.46,1062.25 809.46,1061.21 813.26,1061.21 813.26,1060.18 817.07,1060.18 817.07,1059.14 820.87,1059.14 820.87,1058.10 824.67,1058.10 824.67,1057.05 828.48,1057.05 828.48,1056.00 832.28,1056.00 832.28,1054.95 836.08,1054.95 836.08,1053.89 839.88,1053.89 839.88,1052.83 843.69,1052.83 843.69,1051.77 847.49,1051.77 847.49,1050.70 851.29,1050.70 851.29,1049.63 855.10,1049.63 855.10,1048.56 858.90,1048.56 858.90,1047.48 862.70,1047.48 862.70,1046.40 866.50,1046.40 866.50,1045.32 870.31,1045.32 870.31,1044.24 874.11,1044.24 874.11,1043.15 877.91,1043.15 877.91,1042.06 881.72,1042.06 881.72,1040.96 885.52,1040.96 885.52,1039.87 889.32,1039.87 889.32,1038.77 893.12,1038.77 893.12,1037.66 896.93,1037.66 896.93,1036.56 900.73,1036.56 900.73,1035.45 904.53,1035.45 904.53,1034.34 908.34,1034.34 908.34,1033.22 912.14,1033.22 912.14,1032.11 915.94,1032.11 915.94,1030.99 919.74,1030.99 919.74,1029.87 923.55,1029.87 923.55,1028.74 927.35,1028.74 927.35,1027.62 931.15,1027.62 931.15,1026.49 934.96,1026.49 934.96,1025.35 938.76,1025.35 938.76,1024.22 942.56,1024.22 942.56,1023.08 946.37,1023.08 946.37,1021.94 950.17,1021.94 950.17,1020.80 953.97,1020.80 953.97,1019.66 957.77,1019.66 957.77,1018.51 961.58,1018.51 961.58,1017.37 965.38,1017.37 965.38,1016.22 969.18,1016.22 969.18,1015.07 972.99,1015.07 972.99,1013.91 976.79,1013.91 976.79,1012.76 980.59,1012.76 980.59,1011.60 984.39,1011.60 984.39,1010.44 988.20,1010.44 988.20,1009.28 992.00,1009.28 992.00,1216.00 75.50,1216.00"/>
<polygon fill="#924333" points="75.50,1214.18 79.30,1214.18 79.30,1214.06 83.11,1214.06 83.11,1213.94 86.91,1213.94 86.91,1213.82 90.71,1213.82 90.71,1213.70 94.51,1213.70 94.51,1213.58 98.32,1213.58 98.32,1213.46 102.12,1213.46 102.12,1213.33 105.92,1213.33 105.92,1213.21 109.73,1213.21 109.73,1213.09 113.53,1213.09 113.53,1208.73 117.33,1208.73 117.33,1208.50 121.13,1208.50 121.13,1208.27 124.94,1208.27 124.94,1208.04 128.74,1208.04 128.74,1207.80 132.54,1207.80 132.54,1207.57 136.35,1207.57 136.35,1207.34 140.15,1207.34 140.15,1207.11 143.95,1207.11 143.95,1206.88 147.76,1206.88 147.76,1206.65 151.56,1206.65 151.56,1206.42 155.36,1206.42 155.36,1206.19 159.16,1206.19 159.16,1202.19 162.97,1202.19 162.97,1201.89 166.77,1201.89 166.77,1201.59 170.57,1201.59 170.57,1201.29 174.38,1201.29 174.38,1201.00 178.18,1201.00 178.18,1200.70 181.98,1200.70 181.98,1200.40 185.78,1200.40 185.78,1200.11 189.59,1200.11 189.59,1199.81 193.39,1199.81 193.39,1199.51 197.19,1199.51 197.19,1199.21 201.00,1199.21 201.00,1198.92 204.80,1198.92 204.80,1194.55 208.60,1194.55 208.60,1194.22 212.40,1194.22 212.40,1193.89 216.21,1193.89 216.21,1193.56 220.01,1193.56 220.01,1193.23 223.81,1193.23 223.81,1192.90 227.62,1192.90 227.62,1192.57 231.42,1192.57 231.42,1192.24 235.22,1192.24 235.22,1191.91 239.02,1191.91 239.02,1191.58 242.83,1191.58 242.83,1191.25 246.63,1191.25 246.63,1190.92 250.43,1190.92 250.43,1187.99 254.24,1187.99 254.24,1187.56 258.04,1187.56 258.04,1187.13 261.84,1187.13 261.84,1186.70 265.65,1186.70 265.65,1186.27 269.45,1186.27 269.45,1185.83 273.25,1185.83 273.25,1185.40 277.05,1185.40 277.05,1184.96 280.86,1184.96 280.86,1184.52 284.66,1184.52 284.66,1184.07 288.46,1184.07 288.46,1183.63 292.27,1183.63 292.27,1183.18 296.07,1183.18 296.07,1182.73 299.87,1182.73 299.87,1182.27 303.67,1182.27 303.67,1181.82 307.48,1181.82 307.48,1181.36 311.28,1181.36 311.28,1180.89 315.08,1180.89 315.08,1180.43 318.89,1180.43 318.89,1179.96 322.69,1179.96 322.69,1179.49 326.49,1179.49 326.49,1179.02 330.29,1179.02 330.29,1178.54 334.10,1178.54 334.10,1178.06 337.90,1178.06 337.90,1177.58 341.70,1177.58 341.70,1177.09 345.51,1177.09 345.51,1176.60 349.31,1176.60 349.31,1176.10 353.11,1176.10 353.11,1175.61 356.91,1175.61 356.91,1175.10 360.72,1175.10 360.72,1174.60 364.52,1174.60 364.52,1174.09 368.32,1174.09 368.32,1173.58 372.13,1173.58 372.13,1173.06 375.93,1173.06 375.93,1172.54 379.73,1172.54 379.73,1172.02 383.54,1172.02 383.54,1171.49 387.34,1171.49 387.34,1170.96 391.14,1170.96 391.14,1170.42 394.94,1170.42 394.94,1169.88 398.75,1169.88 398.75,1169.34 402.55,1169.34 402.55,1168.79 406.35,1168.79 406.35,1168.23 410.16,1168.23 410.16,1167.68 413.96,1167.68 413.96,1167.11 417.76,1167.11 417.76,1166.55 421.56,1166.55 421.56,1165.98 425.37,1165.98 425.37,1165.40 429.17,1165.40 429.17,1164.82 432.97,1164.82 432.97,1164.24 436.78,1164.24 436.78,1163.65 440.58,1163.65 440.58,1163.05 444.38,1163.05 444.38,1162.45 448.18,1162.45 448.18,1161.85 451.99,1161.85 451.99,1161.24 455.79,1161.24 455.79,1160.63 459.59,1160.63 459.59,1160.01 463.40,1160.01 463.40,1159.39 467.20,1159.39 467.20,1158.76 471.00,1158.76 471.00,1158.12 474.80,1158.12 474.80,1157.49 478.61,1157.49 478.61,1156.84 482.41,1156.84 482.41,1156.19 486.21,1156.19 486.21,1155.54 490.02,1155.54 490.02,1154.88 493.82,1154.88 493.82,1154.22 497.62,1154.22 497.62,1153.55 501.43,1153.55 501.43,1152.87 505.23,1152.87 505.23,1152.19 509.03,1152.19 509.03,1151.51 512.83,1151.51 512.83,1150.82 516.64,1150.82 516.64,1150.12 520.44,1150.12 520.44,1149.42 524.24,1149.42 524.24,1148.72 528.05,1148.72 528.05,1148.00 531.85,1148.00 531.85,1147.29 535.65,1147.29 535.65,1146.56 539.45,1146.56 539.45,1145.84 543.26,1145.84 543.26,1145.10 547.06,1145.10 547.06,1144.36 550.86,1144.36 550.86,1143.62 554.67,1143.62 554.67,1142.87 558.47,1142.87 558.47,1142.11 562.27,1142.11 562.27,1141.35 566.07,1141.35 566.07,1140.58 569.88,1140.58 569.88,1139.81 573.68,1139.81 573.68,1139.03 577.48,1139.03 577.48,1138.25 581.29,1138.25 581.29,1137.46 585.09,1137.46 585.09,1136.66 588.89,1136.66 588.89,1135.86 592.70,1135.86 592.70,1135.06 596.50,1135.06 596.50,1134.24 600.30,1134.24 600.30,1133.43 604.10,1133.43 604.10,1132.60 607.91,1132.60 607.91,1131.77 611.71,1131.77 611.71,1130.94 615.51,1130.94 615.51,1130.10 619.32,1130.10 619.32,1129.25 623.12,1129.25 623.12,1128.40 626.92,1128.40 626.92,1127.54 630.72,1127.54 630.72,1126.68 634.53,1126.68 634.53,1125.81 638.33,1125.81 638.33,1124.94 642.13,1124.94 642.13,1124.06 645.94,1124.06 645.94,1123.17 649.74,1123.17 649.74,1122.28 653.54,1122.28 653.54,1121.38 657.34,1121.38 657.34,1120.48 661.15,1120.48 661.15,1119.57 664.95,1119.57 664.95,1118.66 668.75,1118.66 668.75,1117.74 672.56,1117.74 672.56,1116.81 676.36,1116.81 676.36,1115.88 680.16,1115.88 680.16,1114.95 683.96,1114.95 683.96,1114.00 687.77,1114.00 687.77,1113.06 691.57,1113.06 691.57,1112.10 695.37,1112.10 695.37,1111.15 699.18,1111.15 699.18,1110.18 702.98,1110.18 702.98,1109.21 706.78,1109.21 706.78,1108.24 710.59,1108.24 710.59,1107.26 714.39,1107.26 714.39,1106.27 718.19,1106.27 718.19,1105.28 721.99,1105.28 721.99,1104.29 725.80,1104.29 725.80,1103.29 729.60,1103.29 729.60,1102.28 733.40,1102.28 733.40,1101.27 737.21,1101.27 737.21,1100.25 741.01,1100.25 741.01,1099.23 744.81,1099.23 744.81,1098.20 748.61,1098.20 748.61,1097.17 752.42,1097.17 752.42,1096.13 756.22,1096.13 756.22,1095.09 760.02,1095.09 760.02,1094.04 763.83,1094.04 763.83,1092.98 767.63,1092.98 767.63,1091.93 771.43,1091.93 771.43,1090.86 775.23,1090.86 775.23,1089.80 779.04,1089.80 779.04,1088.72 782.84,1088.72 782.84,1087.64 786.64,1087.64 786.64,1086.56 790.45,1086.56 790.45,1085.47 794.25,1085.47 794.25,1084.38 798.05,1084.38 798.05,1083.29 801.85,1083.29 801.85,1082.18 805.66,1082.18 805.66,1081.08 809.46,1081.08 809.46,1079.97 813.26,1079.97 813.26,1078.85 817.07,1078.85 817.07,1077.73 820.87,1077.73 820.87,1076.61 824.67,1076.61 824.67,1075.48 828.48,1075.48 828.48,1074.35 832.28,1074.35 832.28,1073.21 836.08,1073.21 836.08,1072.07 839.88,1072.07 839.88,1070.92 843.69,1070.92 843.69,1069.77 847.49,1069.77 847.49,1068.62 851.29,1068.62 851.29,1067.46 855.10,1067.46 855.10,1066.30 858.90,1066.30 858.90,1065.13 862.70,1065.13 862.70,1063.96 866.50,1063.96 866.50,1062.79 870.31,1062.79 870.31,1061.61 874.11,1061.61 874.11,1060.43 877.91,1060.43 877.91,1059.25 881.72,1059.25 881.72,1058.06 885.52,1058.06 885.52,1056.87 889.32,1056.87 889.32,1055.67 893.12,1055.67 893.12,1054.47 896.93,1054.47 896.93,1053.27 900.73,1053.27 900.73,1052.06 904.53,1052.06 904.53,1050.86 908.34,1050.86 908.34,1049.64 912.14,1049.64 912.14,1048.43 915.94,1048.43 915.94,1047.21 919.74,1047.21 919.74,1045.99 923.55,1045.99 923.55,1044.77 927.35,1044.77 927.35,1043.54 931.15,1043.54 931.15,1042.31 934.96,1042.31 934.96,1041.08 938.76,1041.08 938.76,1039.84 942.56,1039.84 942.56,1038.61 946.37,1038.61 946.37,1037.37 950.17,1037.37 950.17,1036.13 953.97,1036.13 953.97,1034.88 957.77,1034.88 957.77,1033.63 961.58,1033.63 961.58,1032.39 965.38,1032.39 965.38,1031.14 969.18,1031.14 969.18,1029.88 972.99,1029.88 972.99,1028.63 976.79,1028.63 976.79,1027.37 980.59,1027.37 980.59,1026.11 984.39,1026.11 984.39,1024.85 988.20,1024.85 988.20,1023.59 992.00,1023.59 992.00,1216.00 75.50,1216.00"/>
<polygon fill="#fe7a52" points="75.50,1214.18 79.30,1214.18 79.30,1214.10 83.11,1214.10 83.11,1214.02 86.91,1214.02 86.91,1213.94 90.71,1213.94 90.71,1213.86 94.51,1213.86 94.51,1213.78 98.32,1213.78 98.32,1213.70 102.12,1213.70 102.12,1213.62 105.92,1213.62 105.92,1213.54 109.73,1213.54 109.73,1213.46 113.53,1213.46 113.53,1211.64 117.33,1211.64 117.33,1211.64 121.13,1211.64 121.13,1211.64 124.94,1211.64 124.94,1211.64 128.74,1211.64 128.74,1211.64 132.54,1211.64 132.54,1211.64 136.35,1211.64 136.35,1211.64 140.15,1211.64 140.15,1211.64 143.95,1211.64 143.95,1211.64 147.76,1211.64 147.76,1211.64 151.56,1211.64 151.56,1211.64 155.36,1211.64 155.36,1211.64 159.16,1211.64 159.16,1208.00 162.97,1208.00 162.97,1208.00 166.77,1208.00 166.77,1208.00 170.57,1208.00 170.57,1208.00 174.38,1208.00 174.38,1208.00 178.18,1208.00 178.18,1208.00 181.98,1208.00 181.98,1208.00 185.78,1208.00 185.78,1208.00 189.59,1208.00 189.59,1208.00 193.39,1208.00 193.39,1208.00 197.19,1208.00 197.19,1208.00 201.00,1208.00 201.00,1208.00 204.80,1208.00 204.80,1204.00 208.60,1204.00 208.60,1204.00 212.40,1204.00 212.40,1204.00 216.21,1204.00 216.21,1204.00 220.01,1204.00 220.01,1204.00 223.81,1204.00 223.81,1204.00 227.62,1204.00 227.62,1204.00 231.42,1204.00 231.42,1204.00 235.22,1204.00 235.22,1204.00 239.02,1204.00 239.02,1204.00 242.83,1204.00 242.83,1204.00 246.63,1204.00 246.63,1204.00 250.43,1204.00 250.43,1201.10 254.24,1201.10 254.24,1201.07 258.04,1201.07 258.04,1201.04 261.84,1201.04 261.84,1201.01 265.65,1201.01 265.65,1200.98 269.45,1200.98 269.45,1200.96 273.25,1200.96 273.25,1200.93 277.05,1200.93 277.05,1200.90 280.86,1200.90 280.86,1200.87 284.66,1200.87 284.66,1200.84 288.46,1200.84 288.46,1200.82 292.27,1200.82 292.27,1200.79 296.07,1200.79 296.07,1200.76 299.87,1200.76 299.87,1200.73 303.67,1200.73 303.67,1200.66 307.48,1200.66 307.48,1200.59 311.28,1200.59 311.28,1200.51 315.08,1200.51 315.08,1200.44 318.89,1200.44 318.89,1200.37 322.69,1200.37 322.69,1200.37 326.49,1200.37 326.49,1200.37 330.29,1200.37 330.29,1200.37 334.10,1200.37 334.10,1200.37 337.90,1200.37 337.90,1200.37 341.70,1200.37 341.70,1200.37 345.51,1200.37 345.51,1200.37 349.31,1200.37 349.31,1200.37 353.11,1200.37 353.11,1200.37 356.91,1200.37 356.91,1200.37 360.72,1200.37 360.72,1200.37 364.52,1200.37 364.52,1200.37 368.32,1200.37 368.32,1200.37 372.13,1200.37 372.13,1200.37 375.93,1200.37 375.93,1200.37 379.73,1200.37 379.73,1200.37 383.54,1200.37 383.54,1200.37 387.34,1200.37 387.34,1200.37 391.14,1200.37 391.14,1200.37 394.94,1200.37 394.94,1200.37 398.75,1200.37 398.75,1200.37 402.55,1200.37 402.55,1200.37 406.35,1200.37 406.35,1200.37 410.16,1200.37 410.16,1200.37 413.96,1200.37 413.96,1200.37 417.76,1200.37 417.76,1200.37 421.56,1200.37 421.56,1200.37 425.37,1200.37 425.37,1200.37 429.17,1200.37 429.17,1200.37 432.97,1200.37 432.97,1200.35 436.78,1200.35 436.78,1200.32 440.58,1200.32 440.58,1200.29 444.38,1200.29 444.38,1200.27 448.18,1200.27 448.18,1200.24 451.99,1200.24 451.99,1200.21 455.79,1200.21 455.79,1200.18 459.59,1200.18 459.59,1200.16 463.40,1200.16 463.40,1200.13 467.20,1200.13 467.20,1200.10 471.00,1200.10 471.00,1200.07 474.80,1200.07 474.80,1200.04 478.61,1200.04 478.61,1200.02 482.41,1200.02 482.41,1199.97 486.21,1199.97 486.21,1199.90 490.02,1199.90 490.02,1199.84 493.82,1199.84 493.82,1199.77 497.62,1199.77 497.62,1199.71 501.43,1199.71 501.43,1199.64 505.23,1199.64 505.23,1199.64 509.03,1199.64 509.03,1199.64 512.83,1199.64 512.83,1199.64 516.64,1199.64 516.64,1199.64 520.44,1199.64 520.44,1199.64 524.24,1199.64 524.24,1199.64 528.05,1199.64 528.05,1199.64 531.85,1199.64 531.85,1199.64 535.65,1199.64 535.65,1199.64 539.45,1199.64 539.45,1199.64 543.26,1199.64 543.26,1199.64 547.06,1199.64 547.06,1199.64 550.86,1199.64 550.86,1199.64 554.67,1199.64 554.67,1199.64 558.47,1199.64 558.47,1199.64 562.27,1199.64 562.27,1199.64 566.07,1199.64 566.07,1199.64 569.88,1199.64 569.88,1199.64 573.68,1199.64 573.68,1199.64 577.48,1199.64 577.48,1199.64 581.29,1199.64 581.29,1199.64 585.09,1199.64 585.09,1199.64 588.89,1199.64 588.89,1199.64 592.70,1199.64 592.70,1199.64 596.50,1199.64 596.50,1199.64 600.30,1199.64 600.30,1199.64 604.10,1199.64 604.10,1199.64 607.91,1199.64 607.91,1199.64 611.71,1199.64 611.71,1199.64 615.51,1199.64 615.51,1199.64 619.32,1199.64 619.32,1199.64 623.12,1199.64 623.12,1199.64 626.92,1199.64 626.92,1199.64 630.72,1199.64 630.72,1199.64 634.53,1199.64 634.53,1199.64 638.33,1199.64 638.33,1199.64 642.13,1199.64 642.13,1199.64 645.94,1199.64 645.94,1199.64 649.74,1199.64 649.74,1199.64 653.54,1199.64 653.54,1199.64 657.34,1199.64 657.34,1199.64 661.15,1199.64 661.15,1199.64 664.95,1199.64 664.95,1199.64 668.75,1199.64 668.75,1199.64 672.56,1199.64 672.56,1199.64 676.36,1199.64 676.36,1199.64 680.16,1199.64 680.16,1199.64 683.96,1199.64 683.96,1199.64 687.77,1199.64 687.77,1199.64 691.57,1199.64 691.57,1199.64 695.37,1199.64 695.37,1199.64 699.18,1199.64 699.18,1199.64 702.98,1199.64 702.98,1199.64 706.78,1199.64 706.78,1199.64 710.59,1199.64 710.59,1199.64 714.39,1199.64 714.39,1199.64 718.19,1199.64 718.19,1199.64 721.99,1199.64 721.99,1199.64 725.80,1199.64 725.80,1199.64 729.60,1199.64 729.60,1199.64 733.40,1199.64 733.40,1199.64 737.21,1199.64 737.21,1199.64 741.01,1199.64 741.01,1199.64 744.81,1199.64 744.81,1199.64 748.61,1199.64 748.61,1199.64 752.42,1199.64 752.42,1199.64 756.22,1199.64 756.22,1199.64 760.02,1199.64 760.02,1199.64 763.83,1199.64 763.83,1199.64 767.63,1199.64 767.63,1199.64 771.43,1199.64 771.43,1199.64 775.23,1199.64 775.23,1199.64 779.04,1199.64 779.04,1199.64 782.84,1199.64 782.84,1199.64 786.64,1199.64 786.64,1199.64 790.45,1199.64 790.45,1199.64 794.25,1199.64 794.25,1199.64 798.05,1199.64 798.05,1199.64 801.85,1199.64 801.85,1199.64 805.66,1199.64 805.66,1199.64 809.46,1199.64 809.46,1199.64 813.26,1199.64 813.26,1199.64 817.07,1199.64 817.07,1199.64 820.87,1199.64 820.87,1199.64 824.67,1199.64 824.67,1199.64 828.48,1199.64 828.48,1199.64 832.28,1199.64 832.28,1199.64 836.08,1199.64 836.08,1199.64 839.88,1199.64 839.88,1199.64 843.69,1199.64 843.69,1199.64 847.49,1199.64 847.49,1199.64 851.29,1199.64 851.29,1199.64 855.10,1199.64 855.10,1199.64 858.90,1199.64 858.90,1199.64 862.70,1199.64 862.70,1199.64 866.50,1199.64 866.50,1199.64 870.31,1199.64 870.31,1199.64 874.11,1199.64 874.11,1199.64 877.91,1199.64 877.91,1199.64 881.72,1199.64 881.72,1199.64 885.52,1199.64 885.52,1199.64 889.32,1199.64 889.32,1199.64 893.12,1199.64 893.12,1199.64 896.93,1199.64 896.93,1199.64 900.73,1199.64 900.73,1199.64 904.53,1199.64 904.53,1199.64 908.34,1199.64 908.34,1199.64 912.14,1199.64 912.14,1199.64 915.94,1199.64 915.94,1199.64 919.74,1199.64 919.74,1199.64 923.55,1199.64 923.55,1199.64 927.35,1199.64 927.35,1199.64 931.15,1199.64 931.15,1199.64 934.96,1199.64 934.96,1199.64 938.76,1199.64 938.76,1199.64 942.56,1199.64 942.56,1199.64 946.37,1199.64 946.37,1199.64 950.17,1199.64 950.17,1199.64 953.97,1199.64 953.97,1199.64 957.77,1199.64 957.77,1199.64 961.58,1199.64 961.58,1199.64 965.38,1199.64 965.38,1199.64 969.18,1199.64 969.18,1199.64 972.99,1199.64 972.99,1199.64 976.79,1199.64 976.79,1199.64 980.59,1199.64 980.59,1199.64 984.39,1199.64 984.39,1199.64 988.20,1199.64 988.20,1199.64 992.00,1199.64 992.00,1216.00 75.50,1216.00"/>
<path d="M79.30 852.5V1216 M83.11 852.5V1216 M86.91 852.5V1216 M90.71 852.5V1216 M94.51 852.5V1216 M98.32 852.5V1216 M102.12 852.5V1216 M105.92 852.5V1216 M109.73 852.5V1216 M113.53 852.5V1216 M117.33 852.5V1216 M121.13 852.5V1216 M124.94 852.5V1216 M128.74 852.5V1216 M132.54 852.5V1216 M136.35 852.5V1216 M140.15 852.5V1216 M143.95 852.5V1216 M147.76 852.5V1216 M151.56 852.5V1216 M155.36 852.5V1216 M159.16 852.5V1216 M162.97 852.5V1216 M166.77 852.5V1216 M170.57 852.5V1216 M174.38 852.5V1216 M178.18 852.5V1216 M181.98 852.5V1216 M185.78 852.5V1216 M189.59 852.5V1216 M193.39 852.5V1216 M197.19 852.5V1216 M201.00 852.5V1216 M204.80 852.5V1216 M208.60 852.5V1216 M212.40 852.5V1216 M216.21 852.5V1216 M220.01 852.5V1216 M223.81 852.5V1216 M227.62 852.5V1216 M231.42 852.5V1216 M235.22 852.5V1216 M239.02 852.5V1216 M242.83 852.5V1216 M246.63 852.5V1216 M250.43 852.5V1216 M254.24 852.5V1216 M258.04 852.5V1216 M261.84 852.5V1216 M265.65 852.5V1216 M269.45 852.5V1216 M273.25 852.5V1216 M277.05 852.5V1216 M280.86 852.5V1216 M284.66 852.5V1216 M288.46 852.5V1216 M292.27 852.5V1216 M296.07 852.5V1216 M299.87 852.5V1216 M303.67 852.5V1216 M307.48 852.5V1216 M311.28 852.5V1216 M315.08 852.5V1216 M318.89 852.5V1216 M322.69 852.5V1216 M326.49 852.5V1216 M330.29 852.5V1216 M334.10 852.5V1216 M337.90 852.5V1216 M341.70 852.5V1216 M345.51 852.5V1216 M349.31 852.5V1216 M353.11 852.5V1216 M356.91 852.5V1216 M360.72 852.5V1216 M364.52 852.5V1216 M368.32 852.5V1216 M372.13 852.5V1216 M375.93 852.5V1216 M379.73 852.5V1216 M383.54 852.5V1216 M387.34 852.5V1216 M391.14 852.5V1216 M394.94 852.5V1216 M398.75 852.5V1216 M402.55 852.5V1216 M406.35 852.5V1216 M410.16 852.5V1216 M413.96 852.5V1216 M417.76 852.5V1216 M421.56 852.5V1216 M425.37 852.5V1216 M429.17 852.5V1216 M432.97 852.5V1216 M436.78 852.5V1216 M440.58 852.5V1216 M444.38 852.5V1216 M448.18 852.5V1216 M451.99 852.5V1216 M455.79 852.5V1216 M459.59 852.5V1216 M463.40 852.5V1216 M467.20 852.5V1216 M471.00 852.5V1216 M474.80 852.5V1216 M478.61 852.5V1216 M482.41 852.5V1216 M486.21 852.5V1216 M490.02 852.5V1216 M493.82 852.5V1216 M497.62 852.5V1216 M501.43 852.5V1216 M505.23 852.5V1216 M509.03 852.5V1216 M512.83 852.5V1216 M516.64 852.5V1216 M520.44 852.5V1216 M524.24 852.5V1216 M528.05 852.5V1216 M531.85 852.5V1216 M535.65 852.5V1216 M539.45 852.5V1216 M543.26 852.5V1216 M547.06 852.5V1216 M550.86 852.5V1216 M554.67 852.5V1216 M558.47 852.5V1216 M562.27 852.5V1216 M566.07 852.5V1216 M569.88 852.5V1216 M573.68 852.5V1216 M577.48 852.5V1216 M581.29 852.5V1216 M585.09 852.5V1216 M588.89 852.5V1216 M592.70 852.5V1216 M596.50 852.5V1216 M600.30 852.5V1216 M604.10 852.5V1216 M607.91 852.5V1216 M611.71 852.5V1216 M615.51 852.5V1216 M619.32 852.5V1216 M623.12 852.5V1216 M626.92 852.5V1216 M630.72 852.5V1216 M634.53 852.5V1216 M638.33 852.5V1216 M642.13 852.5V1216 M645.94 852.5V1216 M649.74 852.5V1216 M653.54 852.5V1216 M657.34 852.5V1216 M661.15 852.5V1216 M664.95 852.5V1216 M668.75 852.5V1216 M672.56 852.5V1216 M676.36 852.5V1216 M680.16 852.5V1216 M683.96 852.5V1216 M687.77 852.5V1216 M691.57 852.5V1216 M695.37 852.5V1216 M699.18 852.5V1216 M702.98 852.5V1216 M706.78 852.5V1216 M710.59 852.5V1216 M714.39 852.5V1216 M718.19 852.5V1216 M721.99 852.5V1216 M725.80 852.5V1216 M729.60 852.5V1216 M733.40 852.5V1216 M737.21 852.5V1216 M741.01 852.5V1216 M744.81 852.5V1216 M748.61 852.5V1216 M752.42 852.5V1216 M756.22 852.5V1216 M760.02 852.5V1216 M763.83 852.5V1216 M767.63 852.5V1216 M771.43 852.5V1216 M775.23 852.5V1216 M779.04 852.5V1216 M782.84 852.5V1216 M786.64 852.5V1216 M790.45 852.5V1216 M794.25 852.5V1216 M798.05 852.5V1216 M801.85 852.5V1216 M805.66 852.5V1216 M809.46 852.5V1216 M813.26 852.5V1216 M817.07 852.5V1216 M820.87 852.5V1216 M824.67 852.5V1216 M828.48 852.5V1216 M832.28 852.5V1216 M836.08 852.5V1216 M839.88 852.5V1216 M843.69 852.5V1216 M847.49 852.5V1216 M851.29 852.5V1216 M855.10 852.5V1216 M858.90 852.5V1216 M862.70 852.5V1216 M866.50 852.5V1216 M870.31 852.5V1216 M874.11 852.5V1216 M877.91 852.5V1216 M881.72 852.5V1216 M885.52 852.5V1216 M889.32 852.5V1216 M893.12 852.5V1216 M896.93 852.5V1216 M900.73 852.5V1216 M904.53 852.5V1216 M908.34 852.5V1216 M912.14 852.5V1216 M915.94 852.5V1216 M919.74 852.5V1216 M923.55 852.5V1216 M927.35 852.5V1216 M931.15 852.5V1216 M934.96 852.5V1216 M938.76 852.5V1216 M942.56 852.5V1216 M946.37 852.5V1216 M950.17 852.5V1216 M953.97 852.5V1216 M957.77 852.5V1216 M961.58 852.5V1216 M965.38 852.5V1216 M969.18 852.5V1216 M972.99 852.5V1216 M976.79 852.5V1216 M980.59 852.5V1216 M984.39 852.5V1216 M988.20 852.5V1216" stroke="#fff" stroke-opacity="0.36" stroke-width="1"/>
<line x1="75.5" x2="992" y1="1143.3" y2="1143.3" stroke="#000" stroke-opacity="0.05" stroke-width="1"/>
<line x1="75.5" x2="992" y1="1070.6" y2="1070.6" stroke="#000" stroke-opacity="0.05" stroke-width="1"/>
<line x1="75.5" x2="992" y1="997.9" y2="997.9" stroke="#000" stroke-opacity="0.05" stroke-width="1"/>
<line x1="75.5" x2="992" y1="925.2" y2="925.2" stroke="#000" stroke-opacity="0.05" stroke-width="1"/>
<path d="M77.40 1217V1222 M81.20 1217V1222 M85.01 1217V1222 M88.81 1217V1222 M92.61 1217V1222 M96.42 1217V1222 M100.22 1217V1222 M104.02 1217V1222 M107.82 1217V1222 M111.63 1217V1222 M115.43 1217V1222 M119.23 1217V1222 M123.04 1217V1222 M126.84 1217V1222 M130.64 1217V1222 M134.45 1217V1222 M138.25 1217V1222 M142.05 1217V1222 M145.85 1217V1222 M149.66 1217V1222 M153.46 1217V1222 M157.26 1217V1222 M161.07 1217V1222 M164.87 1217V1222 M168.67 1217V1222 M172.47 1217V1222 M176.28 1217V1222 M180.08 1217V1222 M183.88 1217V1222 M187.69 1217V1222 M191.49 1217V1222 M195.29 1217V1222 M199.09 1217V1222 M202.90 1217V1222 M206.70 1217V1222 M210.50 1217V1222 M214.31 1217V1222 M218.11 1217V1222 M221.91 1217V1222 M225.71 1217V1222 M229.52 1217V1222 M233.32 1217V1222 M237.12 1217V1222 M240.93 1217V1222 M244.73 1217V1222 M248.53 1217V1222 M252.34 1217V1222 M256.14 1217V1222 M259.94 1217V1222 M263.74 1217V1222 M267.55 1217V1222 M271.35 1217V1222 M275.15 1217V1222 M278.96 1217V1222 M282.76 1217V1222 M286.56 1217V1222 M290.36 1217V1222 M294.17 1217V1222 M297.97 1217V1222 M301.77 1217V1222 M305.58 1217V1222 M309.38 1217V1222 M313.18 1217V1222 M316.98 1217V1222 M320.79 1217V1222 M324.59 1217V1222 M328.39 1217V1222 M332.20 1217V1222 M336.00 1217V1222 M339.80 1217V1222 M343.60 1217V1222 M347.41 1217V1222 M351.21 1217V1222 M355.01 1217V1222 M358.82 1217V1222 M362.62 1217V1222 M366.42 1217V1222 M370.23 1217V1222 M374.03 1217V1222 M377.83 1217V1222 M381.63 1217V1222 M385.44 1217V1222 M389.24 1217V1222 M393.04 1217V1222 M396.85 1217V1222 M400.65 1217V1222 M404.45 1217V1222 M408.25 1217V1222 M412.06 1217V1222 M415.86 1217V1222 M419.66 1217V1222 M423.47 1217V1222 M427.27 1217V1222 M431.07 1217V1222 M434.87 1217V1222 M438.68 1217V1222 M442.48 1217V1222 M446.28 1217V1222 M450.09 1217V1222 M453.89 1217V1222 M457.69 1217V1222 M461.49 1217V1222 M465.30 1217V1222 M469.10 1217V1222 M472.90 1217V1222 M476.71 1217V1222 M480.51 1217V1222 M484.31 1217V1222 M488.12 1217V1222 M491.92 1217V1222 M495.72 1217V1222 M499.52 1217V1222 M503.33 1217V1222 M507.13 1217V1222 M510.93 1217V1222 M514.74 1217V1222 M518.54 1217V1222 M522.34 1217V1222 M526.14 1217V1222 M529.95 1217V1222 M533.75 1217V1222 M537.55 1217V1222 M541.36 1217V1222 M545.16 1217V1222 M548.96 1217V1222 M552.76 1217V1222 M556.57 1217V1222 M560.37 1217V1222 M564.17 1217V1222 M567.98 1217V1222 M571.78 1217V1222 M575.58 1217V1222 M579.38 1217V1222 M583.19 1217V1222 M586.99 1217V1222 M590.79 1217V1222 M594.60 1217V1222 M598.40 1217V1222 M602.20 1217V1222 M606.01 1217V1222 M609.81 1217V1222 M613.61 1217V1222 M617.41 1217V1222 M621.22 1217V1222 M625.02 1217V1222 M628.82 1217V1222 M632.63 1217V1222 M636.43 1217V1222 M640.23 1217V1222 M644.03 1217V1222 M647.84 1217V1222 M651.64 1217V1222 M655.44 1217V1222 M659.25 1217V1222 M663.05 1217V1222 M666.85 1217V1222 M670.65 1217V1222 M674.46 1217V1222 M678.26 1217V1222 M682.06 1217V1222 M685.87 1217V1222 M689.67 1217V1222 M693.47 1217V1222 M697.27 1217V1222 M701.08 1217V1222 M704.88 1217V1222 M708.68 1217V1222 M712.49 1217V1222 M716.29 1217V1222 M720.09 1217V1222 M723.90 1217V1222 M727.70 1217V1222 M731.50 1217V1222 M735.30 1217V1222 M739.11 1217V1222 M742.91 1217V1222 M746.71 1217V1222 M750.52 1217V1222 M754.32 1217V1222 M758.12 1217V1222 M761.92 1217V1222 M765.73 1217V1222 M769.53 1217V1222 M773.33 1217V1222 M777.14 1217V1222 M780.94 1217V1222 M784.74 1217V1222 M788.54 1217V1222 M792.35 1217V1222 M796.15 1217V1222 M799.95 1217V1222 M803.76 1217V1222 M807.56 1217V1222 M811.36 1217V1222 M815.16 1217V1222 M818.97 1217V1222 M822.77 1217V1222 M826.57 1217V1222 M830.38 1217V1222 M834.18 1217V1222 M837.98 1217V1222 M841.79 1217V1222 M845.59 1217V1222 M849.39 1217V1222 M853.19 1217V1222 M857.00 1217V1222 M860.80 1217V1222 M864.60 1217V1222 M868.41 1217V1222 M872.21 1217V1222 M876.01 1217V1222 M879.81 1217V1222 M883.62 1217V1222 M887.42 1217V1222 M891.22 1217V1222 M895.03 1217V1222 M898.83 1217V1222 M902.63 1217V1222 M906.43 1217V1222 M910.24 1217V1222 M914.04 1217V1222 M917.84 1217V1222 M921.65 1217V1222 M925.45 1217V1222 M929.25 1217V1222 M933.05 1217V1222 M936.86 1217V1222 M940.66 1217V1222 M944.46 1217V1222 M948.27 1217V1222 M952.07 1217V1222 M955.87 1217V1222 M959.68 1217V1222 M963.48 1217V1222 M967.28 1217V1222 M971.08 1217V1222 M974.89 1217V1222 M978.69 1217V1222 M982.49 1217V1222 M986.30 1217V1222 M990.10 1217V1222" stroke="#e4e4e4" stroke-width="1.6"/>
<text x="71.0" y="1221.0" text-anchor="end" font-size="14.3" fill="#3f5f63" font-family="Liberation Sans" letter-spacing="-0.5">0%</text>
<text x="71.0" y="1148.3" text-anchor="end" font-size="14.3" fill="#3f5f63" font-family="Liberation Sans" letter-spacing="-0.5">20%</text>
<text x="71.0" y="1075.6" text-anchor="end" font-size="14.3" fill="#3f5f63" font-family="Liberation Sans" letter-spacing="-0.5">40%</text>
<text x="71.0" y="1002.9" text-anchor="end" font-size="14.3" fill="#3f5f63" font-family="Liberation Sans" letter-spacing="-0.5">60%</text>
<text x="71.0" y="930.2" text-anchor="end" font-size="14.3" fill="#3f5f63" font-family="Liberation Sans" letter-spacing="-0.5">80%</text>
<text x="71.0" y="857.5" text-anchor="end" font-size="14.3" fill="#3f5f63" font-family="Liberation Sans" letter-spacing="-0.5">100%</text>
<text transform="translate(81.00,1226) rotate(-90)" text-anchor="end" font-size="15.5" fill="#3f5f63" font-family="Liberation Sans" letter-spacing="-0.6">0</text>
<text transform="translate(111.42,1226) rotate(-90)" text-anchor="end" font-size="15.5" fill="#3f5f63" font-family="Liberation Sans" letter-spacing="-0.6">8</text>
<text transform="translate(141.85,1226) rotate(-90)" text-anchor="end" font-size="15.5" fill="#3f5f63" font-family="Liberation Sans" letter-spacing="-0.6">16</text>
<text transform="translate(172.27,1226) rotate(-90)" text-anchor="end" font-size="15.5" fill="#3f5f63" font-family="Liberation Sans" letter-spacing="-0.6">24</text>
<text transform="translate(202.69,1226) rotate(-90)" text-anchor="end" font-size="15.5" fill="#3f5f63" font-family="Liberation Sans" letter-spacing="-0.6">32</text>
<text transform="translate(233.12,1226) rotate(-90)" text-anchor="end" font-size="15.5" fill="#3f5f63" font-family="Liberation Sans" letter-spacing="-0.6">40</text>
<text transform="translate(263.54,1226) rotate(-90)" text-anchor="end" font-size="15.5" fill="#3f5f63" font-family="Liberation Sans" letter-spacing="-0.6">48</text>
<text transform="translate(293.96,1226) rotate(-90)" text-anchor="end" font-size="15.5" fill="#3f5f63" font-family="Liberation Sans" letter-spacing="-0.6">56</text>
<text transform="translate(324.39,1226) rotate(-90)" text-anchor="end" font-size="15.5" fill="#3f5f63" font-family="Liberation Sans" letter-spacing="-0.6">64</text>
<text transform="translate(354.81,1226) rotate(-90)" text-anchor="end" font-size="15.5" fill="#3f5f63" font-family="Liberation Sans" letter-spacing="-0.6">72</text>
<text transform="translate(385.23,1226) rotate(-90)" text-anchor="end" font-size="15.5" fill="#3f5f63" font-family="Liberation Sans" letter-spacing="-0.6">80</text>
<text transform="translate(415.66,1226) rotate(-90)" text-anchor="end" font-size="15.5" fill="#3f5f63" font-family="Liberation Sans" letter-spacing="-0.6">88</text>
<text transform="translate(446.08,1226) rotate(-90)" text-anchor="end" font-size="15.5" fill="#3f5f63" font-family="Liberation Sans" letter-spacing="-0.6">96</text>
<text transform="translate(476.50,1226) rotate(-90)" text-anchor="end" font-size="15.5" fill="#3f5f63" font-family="Liberation Sans" letter-spacing="-0.6">104</text>
<text transform="translate(506.93,1226) rotate(-90)" text-anchor="end" font-size="15.5" fill="#3f5f63" font-family="Liberation Sans" letter-spacing="-0.6">112</text>
<text transform="translate(537.35,1226) rotate(-90)" text-anchor="end" font-size="15.5" fill="#3f5f63" font-family="Liberation Sans" letter-spacing="-0.6">120</text>
<text transform="translate(567.77,1226) rotate(-90)" text-anchor="end" font-size="15.5" fill="#3f5f63" font-family="Liberation Sans" letter-spacing="-0.6">128</text>
<text transform="translate(598.20,1226) rotate(-90)" text-anchor="end" font-size="15.5" fill="#3f5f63" font-family="Liberation Sans" letter-spacing="-0.6">136</text>
<text transform="translate(628.62,1226) rotate(-90)" text-anchor="end" font-size="15.5" fill="#3f5f63" font-family="Liberation Sans" letter-spacing="-0.6">144</text>
<text transform="translate(659.04,1226) rotate(-90)" text-anchor="end" font-size="15.5" fill="#3f5f63" font-family="Liberation Sans" letter-spacing="-0.6">152</text>
<text transform="translate(689.47,1226) rotate(-90)" text-anchor="end" font-size="15.5" fill="#3f5f63" font-family="Liberation Sans" letter-spacing="-0.6">160</text>
<text transform="translate(719.89,1226) rotate(-90)" text-anchor="end" font-size="15.5" fill="#3f5f63" font-family="Liberation Sans" letter-spacing="-0.6">168</text>
<text transform="translate(750.31,1226) rotate(-90)" text-anchor="end" font-size="15.5" fill="#3f5f63" font-family="Liberation Sans" letter-spacing="-0.6">176</text>
<text transform="translate(780.74,1226) rotate(-90)" text-anchor="end" font-size="15.5" fill="#3f5f63" font-family="Liberation Sans" letter-spacing="-0.6">184</text>
<text transform="translate(811.16,1226) rotate(-90)" text-anchor="end" font-size="15.5" fill="#3f5f63" font-family="Liberation Sans" letter-spacing="-0.6">192</text>
<text transform="translate(841.58,1226) rotate(-90)" text-anchor="end" font-size="15.5" fill="#3f5f63" font-family="Liberation Sans" letter-spacing="-0.6">200</text>
<text transform="translate(872.01,1226) rotate(-90)" text-anchor="end" font-size="15.5" fill="#3f5f63" font-family="Liberation Sans" letter-spacing="-0.6">208</text>
<text transform="translate(902.43,1226) rotate(-90)" text-anchor="end" font-size="15.5" fill="#3f5f63" font-family="Liberation Sans" letter-spacing="-0.6">216</text>
<text transform="translate(932.85,1226) rotate(-90)" text-anchor="end" font-size="15.5" fill="#3f5f63" font-family="Liberation Sans" letter-spacing="-0.6">224</text>
<text transform="translate(963.28,1226) rotate(-90)" text-anchor="end" font-size="15.5" fill="#3f5f63" font-family="Liberation Sans" letter-spacing="-0.6">232</text>
<text transform="translate(993.70,1226) rotate(-90)" text-anchor="end" font-size="15.5" fill="#3f5f63" font-family="Liberation Sans" letter-spacing="-0.6">240</text>
</svg>
<svg class="abs" style="left:1033px;top:795px" width="998" height="538" viewBox="1033 795 998 538">
<rect x="1091.5" y="852.5" width="916.5" height="363.5" fill="#649b36"/>
<polygon fill="#3c5e6e" points="1091.50,1214.91 1095.30,1214.91 1095.30,1214.02 1099.11,1214.02 1099.11,1213.13 1102.91,1213.13 1102.91,1212.24 1106.71,1212.24 1106.71,1211.36 1110.51,1211.36 1110.51,1210.47 1114.32,1210.47 1114.32,1209.58 1118.12,1209.58 1118.12,1208.69 1121.92,1208.69 1121.92,1207.80 1125.73,1207.80 1125.73,1206.91 1129.53,1206.91 1129.53,1203.28 1133.33,1203.28 1133.33,1202.48 1137.13,1202.48 1137.13,1201.69 1140.94,1201.69 1140.94,1200.90 1144.74,1200.90 1144.74,1200.11 1148.54,1200.11 1148.54,1199.31 1152.35,1199.31 1152.35,1198.52 1156.15,1198.52 1156.15,1197.73 1159.95,1197.73 1159.95,1196.93 1163.76,1196.93 1163.76,1196.14 1167.56,1196.14 1167.56,1195.35 1171.36,1195.35 1171.36,1194.55 1175.16,1194.55 1175.16,1189.65 1178.97,1189.65 1178.97,1189.10 1182.77,1189.10 1182.77,1188.56 1186.57,1188.56 1186.57,1188.01 1190.38,1188.01 1190.38,1187.47 1194.18,1187.47 1194.18,1186.92 1197.98,1186.92 1197.98,1186.37 1201.78,1186.37 1201.78,1185.83 1205.59,1185.83 1205.59,1185.28 1209.39,1185.28 1209.39,1184.74 1213.19,1184.74 1213.19,1184.19 1217.00,1184.19 1217.00,1183.65 1220.80,1183.65 1220.80,1179.29 1224.60,1179.29 1224.60,1178.76 1228.40,1178.76 1228.40,1178.23 1232.21,1178.23 1232.21,1177.70 1236.01,1177.70 1236.01,1177.17 1239.81,1177.17 1239.81,1176.64 1243.62,1176.64 1243.62,1176.11 1247.42,1176.11 1247.42,1175.59 1251.22,1175.59 1251.22,1175.06 1255.02,1175.06 1255.02,1174.53 1258.83,1174.53 1258.83,1174.00 1262.63,1174.00 1262.63,1173.47 1266.43,1173.47 1266.43,1169.11 1270.24,1169.11 1270.24,1168.61 1274.04,1168.61 1274.04,1168.11 1277.84,1168.11 1277.84,1167.61 1281.65,1167.61 1281.65,1167.11 1285.45,1167.11 1285.45,1166.61 1289.25,1166.61 1289.25,1166.11 1293.05,1166.11 1293.05,1165.62 1296.86,1165.62 1296.86,1165.12 1300.66,1165.12 1300.66,1164.62 1304.46,1164.62 1304.46,1164.12 1308.27,1164.12 1308.27,1163.62 1312.07,1163.62 1312.07,1163.12 1315.87,1163.12 1315.87,1162.62 1319.67,1162.62 1319.67,1162.12 1323.48,1162.12 1323.48,1161.62 1327.28,1161.62 1327.28,1161.13 1331.08,1161.13 1331.08,1160.63 1334.89,1160.63 1334.89,1160.13 1338.69,1160.13 1338.69,1159.63 1342.49,1159.63 1342.49,1159.13 1346.29,1159.13 1346.29,1158.62 1350.10,1158.62 1350.10,1158.10 1353.90,1158.10 1353.90,1157.58 1357.70,1157.58 1357.70,1157.06 1361.51,1157.06 1361.51,1156.53 1365.31,1156.53 1365.31,1156.01 1369.11,1156.01 1369.11,1155.49 1372.91,1155.49 1372.91,1154.97 1376.72,1154.97 1376.72,1154.45 1380.52,1154.45 1380.52,1153.93 1384.32,1153.93 1384.32,1153.41 1388.13,1153.41 1388.13,1152.89 1391.93,1152.89 1391.93,1152.37 1395.73,1152.37 1395.73,1151.85 1399.54,1151.85 1399.54,1151.33 1403.34,1151.33 1403.34,1150.81 1407.14,1150.81 1407.14,1150.29 1410.94,1150.29 1410.94,1149.76 1414.75,1149.76 1414.75,1149.24 1418.55,1149.24 1418.55,1148.72 1422.35,1148.72 1422.35,1148.20 1426.16,1148.20 1426.16,1147.68 1429.96,1147.68 1429.96,1147.16 1433.76,1147.16 1433.76,1146.64 1437.56,1146.64 1437.56,1146.12 1441.37,1146.12 1441.37,1145.60 1445.17,1145.60 1445.17,1145.08 1448.97,1145.08 1448.97,1144.56 1452.78,1144.56 1452.78,1144.04 1456.58,1144.04 1456.58,1143.51 1460.38,1143.51 1460.38,1142.99 1464.18,1142.99 1464.18,1142.47 1467.99,1142.47 1467.99,1141.95 1471.79,1141.95 1471.79,1141.43 1475.59,1141.43 1475.59,1140.89 1479.40,1140.89 1479.40,1140.32 1483.20,1140.32 1483.20,1139.74 1487.00,1139.74 1487.00,1139.17 1490.80,1139.17 1490.80,1138.59 1494.61,1138.59 1494.61,1138.02 1498.41,1138.02 1498.41,1137.45 1502.21,1137.45 1502.21,1136.87 1506.02,1136.87 1506.02,1136.30 1509.82,1136.30 1509.82,1135.72 1513.62,1135.72 1513.62,1135.15 1517.43,1135.15 1517.43,1134.58 1521.23,1134.58 1521.23,1134.00 1525.03,1134.00 1525.03,1133.43 1528.83,1133.43 1528.83,1132.85 1532.64,1132.85 1532.64,1132.28 1536.44,1132.28 1536.44,1131.71 1540.24,1131.71 1540.24,1131.13 1544.05,1131.13 1544.05,1130.56 1547.85,1130.56 1547.85,1129.98 1551.65,1129.98 1551.65,1129.41 1555.45,1129.41 1555.45,1128.84 1559.26,1128.84 1559.26,1128.26 1563.06,1128.26 1563.06,1127.69 1566.86,1127.69 1566.86,1127.11 1570.67,1127.11 1570.67,1126.54 1574.47,1126.54 1574.47,1125.97 1578.27,1125.97 1578.27,1125.39 1582.07,1125.39 1582.07,1124.82 1585.88,1124.82 1585.88,1124.24 1589.68,1124.24 1589.68,1123.67 1593.48,1123.67 1593.48,1123.10 1597.29,1123.10 1597.29,1122.52 1601.09,1122.52 1601.09,1121.95 1604.89,1121.95 1604.89,1121.35 1608.70,1121.35 1608.70,1120.65 1612.50,1120.65 1612.50,1119.95 1616.30,1119.95 1616.30,1119.25 1620.10,1119.25 1620.10,1118.55 1623.91,1118.55 1623.91,1117.85 1627.71,1117.85 1627.71,1117.15 1631.51,1117.15 1631.51,1116.45 1635.32,1116.45 1635.32,1115.76 1639.12,1115.76 1639.12,1115.06 1642.92,1115.06 1642.92,1114.36 1646.72,1114.36 1646.72,1113.66 1650.53,1113.66 1650.53,1112.96 1654.33,1112.96 1654.33,1112.26 1658.13,1112.26 1658.13,1111.56 1661.94,1111.56 1661.94,1110.86 1665.74,1110.86 1665.74,1110.16 1669.54,1110.16 1669.54,1109.46 1673.34,1109.46 1673.34,1108.76 1677.15,1108.76 1677.15,1108.06 1680.95,1108.06 1680.95,1107.36 1684.75,1107.36 1684.75,1106.66 1688.56,1106.66 1688.56,1105.96 1692.36,1105.96 1692.36,1105.26 1696.16,1105.26 1696.16,1104.57 1699.96,1104.57 1699.96,1103.87 1703.77,1103.87 1703.77,1103.17 1707.57,1103.17 1707.57,1102.47 1711.37,1102.47 1711.37,1101.77 1715.18,1101.77 1715.18,1101.07 1718.98,1101.07 1718.98,1100.37 1722.78,1100.37 1722.78,1099.67 1726.59,1099.67 1726.59,1098.97 1730.39,1098.97 1730.39,1098.27 1734.19,1098.27 1734.19,1097.57 1737.99,1097.57 1737.99,1096.87 1741.80,1096.87 1741.80,1096.17 1745.60,1096.17 1745.60,1095.47 1749.40,1095.47 1749.40,1094.77 1753.21,1094.77 1753.21,1094.07 1757.01,1094.07 1757.01,1093.38 1760.81,1093.38 1760.81,1092.68 1764.61,1092.68 1764.61,1092.03 1768.42,1092.03 1768.42,1091.87 1772.22,1091.87 1772.22,1091.70 1776.02,1091.70 1776.02,1091.54 1779.83,1091.54 1779.83,1091.38 1783.63,1091.38 1783.63,1091.22 1787.43,1091.22 1787.43,1091.05 1791.23,1091.05 1791.23,1090.89 1795.04,1090.89 1795.04,1090.73 1798.84,1090.73 1798.84,1090.57 1802.64,1090.57 1802.64,1090.40 1806.45,1090.40 1806.45,1090.24 1810.25,1090.24 1810.25,1090.08 1814.05,1090.08 1814.05,1089.91 1817.85,1089.91 1817.85,1089.75 1821.66,1089.75 1821.66,1089.59 1825.46,1089.59 1825.46,1089.43 1829.26,1089.43 1829.26,1089.26 1833.07,1089.26 1833.07,1089.10 1836.87,1089.10 1836.87,1088.94 1840.67,1088.94 1840.67,1088.78 1844.48,1088.78 1844.48,1088.60 1848.28,1088.60 1848.28,1088.42 1852.08,1088.42 1852.08,1088.25 1855.88,1088.25 1855.88,1088.07 1859.69,1088.07 1859.69,1087.90 1863.49,1087.90 1863.49,1087.72 1867.29,1087.72 1867.29,1087.32 1871.10,1087.32 1871.10,1086.86 1874.90,1086.86 1874.90,1086.40 1878.70,1086.40 1878.70,1085.94 1882.50,1085.94 1882.50,1085.48 1886.31,1085.48 1886.31,1085.02 1890.11,1085.02 1890.11,1084.56 1893.91,1084.56 1893.91,1084.10 1897.72,1084.10 1897.72,1083.64 1901.52,1083.64 1901.52,1083.18 1905.32,1083.18 1905.32,1082.72 1909.12,1082.72 1909.12,1082.26 1912.93,1082.26 1912.93,1081.79 1916.73,1081.79 1916.73,1081.33 1920.53,1081.33 1920.53,1080.87 1924.34,1080.87 1924.34,1080.41 1928.14,1080.41 1928.14,1079.74 1931.94,1079.74 1931.94,1079.06 1935.74,1079.06 1935.74,1078.39 1939.55,1078.39 1939.55,1077.71 1943.35,1077.71 1943.35,1077.04 1947.15,1077.04 1947.15,1076.36 1950.96,1076.36 1950.96,1075.69 1954.76,1075.69 1954.76,1075.01 1958.56,1075.01 1958.56,1074.34 1962.37,1074.34 1962.37,1073.66 1966.17,1073.66 1966.17,1072.99 1969.97,1072.99 1969.97,1072.31 1973.77,1072.31 1973.77,1071.64 1977.58,1071.64 1977.58,1070.96 1981.38,1070.96 1981.38,1070.29 1985.18,1070.29 1985.18,1069.61 1988.99,1069.61 1988.99,1068.94 1992.79,1068.94 1992.79,1068.26 1996.59,1068.26 1996.59,1067.59 2000.39,1067.59 2000.39,1066.91 2004.20,1066.91 2004.20,1066.24 2008.00,1066.24 2008.00,1216.00 1091.50,1216.00"/>
<polygon fill="#d8a74a" points="1091.50,1214.91 1095.30,1214.91 1095.30,1214.26 1099.11,1214.26 1099.11,1213.62 1102.91,1213.62 1102.91,1212.97 1106.71,1212.97 1106.71,1212.32 1110.51,1212.32 1110.51,1211.68 1114.32,1211.68 1114.32,1211.03 1118.12,1211.03 1118.12,1210.39 1121.92,1210.39 1121.92,1209.74 1125.73,1209.74 1125.73,1209.09 1129.53,1209.09 1129.53,1205.10 1133.33,1205.10 1133.33,1204.53 1137.13,1204.53 1137.13,1203.97 1140.94,1203.97 1140.94,1203.41 1144.74,1203.41 1144.74,1202.85 1148.54,1202.85 1148.54,1202.29 1152.35,1202.29 1152.35,1201.72 1156.15,1201.72 1156.15,1201.16 1159.95,1201.16 1159.95,1200.60 1163.76,1200.60 1163.76,1200.04 1167.56,1200.04 1167.56,1199.48 1171.36,1199.48 1171.36,1198.92 1175.16,1198.92 1175.16,1194.55 1178.97,1194.55 1178.97,1194.02 1182.77,1194.02 1182.77,1193.50 1186.57,1193.50 1186.57,1192.97 1190.38,1192.97 1190.38,1192.44 1194.18,1192.44 1194.18,1191.91 1197.98,1191.91 1197.98,1191.38 1201.78,1191.38 1201.78,1190.85 1205.59,1190.85 1205.59,1190.32 1209.39,1190.32 1209.39,1189.79 1213.19,1189.79 1213.19,1189.27 1217.00,1189.27 1217.00,1188.74 1220.80,1188.74 1220.80,1185.10 1224.60,1185.10 1224.60,1184.69 1228.40,1184.69 1228.40,1184.28 1232.21,1184.28 1232.21,1183.86 1236.01,1183.86 1236.01,1183.45 1239.81,1183.45 1239.81,1183.04 1243.62,1183.04 1243.62,1182.62 1247.42,1182.62 1247.42,1182.21 1251.22,1182.21 1251.22,1181.80 1255.02,1181.80 1255.02,1181.38 1258.83,1181.38 1258.83,1180.97 1262.63,1180.97 1262.63,1180.56 1266.43,1180.56 1266.43,1176.02 1270.24,1176.02 1270.24,1175.61 1274.04,1175.61 1274.04,1175.20 1277.84,1175.20 1277.84,1174.79 1281.65,1174.79 1281.65,1174.38 1285.45,1174.38 1285.45,1173.97 1289.25,1173.97 1289.25,1173.56 1293.05,1173.56 1293.05,1173.15 1296.86,1173.15 1296.86,1172.74 1300.66,1172.74 1300.66,1172.33 1304.46,1172.33 1304.46,1171.92 1308.27,1171.92 1308.27,1171.51 1312.07,1171.51 1312.07,1171.10 1315.87,1171.10 1315.87,1170.69 1319.67,1170.69 1319.67,1170.28 1323.48,1170.28 1323.48,1169.87 1327.28,1169.87 1327.28,1169.46 1331.08,1169.46 1331.08,1169.05 1334.89,1169.05 1334.89,1168.64 1338.69,1168.64 1338.69,1168.23 1342.49,1168.23 1342.49,1167.82 1346.29,1167.82 1346.29,1167.35 1350.10,1167.35 1350.10,1166.86 1353.90,1166.86 1353.90,1166.36 1357.70,1166.36 1357.70,1165.86 1361.51,1165.86 1361.51,1165.36 1365.31,1165.36 1365.31,1164.86 1369.11,1164.86 1369.11,1164.36 1372.91,1164.36 1372.91,1163.86 1376.72,1163.86 1376.72,1163.36 1380.52,1163.36 1380.52,1162.86 1384.32,1162.86 1384.32,1162.36 1388.13,1162.36 1388.13,1161.86 1391.93,1161.86 1391.93,1161.36 1395.73,1161.36 1395.73,1160.86 1399.54,1160.86 1399.54,1160.36 1403.34,1160.36 1403.34,1159.86 1407.14,1159.86 1407.14,1159.36 1410.94,1159.36 1410.94,1158.86 1414.75,1158.86 1414.75,1158.36 1418.55,1158.36 1418.55,1157.86 1422.35,1157.86 1422.35,1157.36 1426.16,1157.36 1426.16,1156.86 1429.96,1156.86 1429.96,1156.36 1433.76,1156.36 1433.76,1155.87 1437.56,1155.87 1437.56,1155.37 1441.37,1155.37 1441.37,1154.87 1445.17,1154.87 1445.17,1154.37 1448.97,1154.37 1448.97,1153.87 1452.78,1153.87 1452.78,1153.37 1456.58,1153.37 1456.58,1152.87 1460.38,1152.87 1460.38,1152.37 1464.18,1152.37 1464.18,1151.87 1467.99,1151.87 1467.99,1151.37 1471.79,1151.37 1471.79,1150.87 1475.59,1150.87 1475.59,1150.37 1479.40,1150.37 1479.40,1149.86 1483.20,1149.86 1483.20,1149.35 1487.00,1149.35 1487.00,1148.84 1490.80,1148.84 1490.80,1148.33 1494.61,1148.33 1494.61,1147.82 1498.41,1147.82 1498.41,1147.30 1502.21,1147.30 1502.21,1146.79 1506.02,1146.79 1506.02,1146.28 1509.82,1146.28 1509.82,1145.77 1513.62,1145.77 1513.62,1145.26 1517.43,1145.26 1517.43,1144.75 1521.23,1144.75 1521.23,1144.24 1525.03,1144.24 1525.03,1143.73 1528.83,1143.73 1528.83,1143.22 1532.64,1143.22 1532.64,1142.71 1536.44,1142.71 1536.44,1142.20 1540.24,1142.20 1540.24,1141.69 1544.05,1141.69 1544.05,1141.18 1547.85,1141.18 1547.85,1140.67 1551.65,1140.67 1551.65,1140.16 1555.45,1140.16 1555.45,1139.65 1559.26,1139.65 1559.26,1139.14 1563.06,1139.14 1563.06,1138.63 1566.86,1138.63 1566.86,1138.12 1570.67,1138.12 1570.67,1137.61 1574.47,1137.61 1574.47,1137.10 1578.27,1137.10 1578.27,1136.59 1582.07,1136.59 1582.07,1136.08 1585.88,1136.08 1585.88,1135.57 1589.68,1135.57 1589.68,1135.06 1593.48,1135.06 1593.48,1134.55 1597.29,1134.55 1597.29,1134.04 1601.09,1134.04 1601.09,1133.53 1604.89,1133.53 1604.89,1132.98 1608.70,1132.98 1608.70,1132.29 1612.50,1132.29 1612.50,1131.60 1616.30,1131.60 1616.30,1130.91 1620.10,1130.91 1620.10,1130.22 1623.91,1130.22 1623.91,1129.53 1627.71,1129.53 1627.71,1128.84 1631.51,1128.84 1631.51,1128.15 1635.32,1128.15 1635.32,1127.46 1639.12,1127.46 1639.12,1126.77 1642.92,1126.77 1642.92,1126.08 1646.72,1126.08 1646.72,1125.39 1650.53,1125.39 1650.53,1124.70 1654.33,1124.70 1654.33,1124.00 1658.13,1124.00 1658.13,1123.31 1661.94,1123.31 1661.94,1122.62 1665.74,1122.62 1665.74,1121.93 1669.54,1121.93 1669.54,1121.24 1673.34,1121.24 1673.34,1120.55 1677.15,1120.55 1677.15,1119.86 1680.95,1119.86 1680.95,1119.17 1684.75,1119.17 1684.75,1118.48 1688.56,1118.48 1688.56,1117.79 1692.36,1117.79 1692.36,1117.10 1696.16,1117.10 1696.16,1116.41 1699.96,1116.41 1699.96,1115.72 1703.77,1115.72 1703.77,1115.02 1707.57,1115.02 1707.57,1114.33 1711.37,1114.33 1711.37,1113.64 1715.18,1113.64 1715.18,1112.95 1718.98,1112.95 1718.98,1112.26 1722.78,1112.26 1722.78,1111.57 1726.59,1111.57 1726.59,1110.88 1730.39,1110.88 1730.39,1110.19 1734.19,1110.19 1734.19,1109.50 1737.99,1109.50 1737.99,1108.81 1741.80,1108.81 1741.80,1108.12 1745.60,1108.12 1745.60,1107.43 1749.40,1107.43 1749.40,1106.74 1753.21,1106.74 1753.21,1106.05 1757.01,1106.05 1757.01,1105.35 1760.81,1105.35 1760.81,1104.66 1764.61,1104.66 1764.61,1104.01 1768.42,1104.01 1768.42,1103.66 1772.22,1103.66 1772.22,1103.32 1776.02,1103.32 1776.02,1102.98 1779.83,1102.98 1779.83,1102.63 1783.63,1102.63 1783.63,1102.29 1787.43,1102.29 1787.43,1101.95 1791.23,1101.95 1791.23,1101.60 1795.04,1101.60 1795.04,1101.26 1798.84,1101.26 1798.84,1100.92 1802.64,1100.92 1802.64,1100.57 1806.45,1100.57 1806.45,1100.23 1810.25,1100.23 1810.25,1099.88 1814.05,1099.88 1814.05,1099.54 1817.85,1099.54 1817.85,1099.20 1821.66,1099.20 1821.66,1098.85 1825.46,1098.85 1825.46,1098.51 1829.26,1098.51 1829.26,1098.17 1833.07,1098.17 1833.07,1097.82 1836.87,1097.82 1836.87,1097.48 1840.67,1097.48 1840.67,1097.14 1844.48,1097.14 1844.48,1096.49 1848.28,1096.49 1848.28,1095.85 1852.08,1095.85 1852.08,1095.20 1855.88,1095.20 1855.88,1094.56 1859.69,1094.56 1859.69,1093.91 1863.49,1093.91 1863.49,1093.27 1867.29,1093.27 1867.29,1092.68 1871.10,1092.68 1871.10,1092.10 1874.90,1092.10 1874.90,1091.53 1878.70,1091.53 1878.70,1090.95 1882.50,1090.95 1882.50,1090.38 1886.31,1090.38 1886.31,1089.80 1890.11,1089.80 1890.11,1089.23 1893.91,1089.23 1893.91,1088.65 1897.72,1088.65 1897.72,1088.08 1901.52,1088.08 1901.52,1087.50 1905.32,1087.50 1905.32,1086.93 1909.12,1086.93 1909.12,1086.35 1912.93,1086.35 1912.93,1085.77 1916.73,1085.77 1916.73,1085.20 1920.53,1085.20 1920.53,1084.62 1924.34,1084.62 1924.34,1084.05 1928.14,1084.05 1928.14,1083.31 1931.94,1083.31 1931.94,1082.56 1935.74,1082.56 1935.74,1081.82 1939.55,1081.82 1939.55,1081.07 1943.35,1081.07 1943.35,1080.33 1947.15,1080.33 1947.15,1079.58 1950.96,1079.58 1950.96,1078.84 1954.76,1078.84 1954.76,1078.10 1958.56,1078.10 1958.56,1077.35 1962.37,1077.35 1962.37,1076.61 1966.17,1076.61 1966.17,1075.86 1969.97,1075.86 1969.97,1075.12 1973.77,1075.12 1973.77,1074.37 1977.58,1074.37 1977.58,1073.63 1981.38,1073.63 1981.38,1072.88 1985.18,1072.88 1985.18,1072.14 1988.99,1072.14 1988.99,1071.40 1992.79,1071.40 1992.79,1070.65 1996.59,1070.65 1996.59,1069.91 2000.39,1069.91 2000.39,1069.16 2004.20,1069.16 2004.20,1068.42 2008.00,1068.42 2008.00,1216.00 1091.50,1216.00"/>
<polygon fill="#924333" points="1091.50,1214.91 1095.30,1214.91 1095.30,1214.79 1099.11,1214.79 1099.11,1214.67 1102.91,1214.67 1102.91,1214.55 1106.71,1214.55 1106.71,1214.42 1110.51,1214.42 1110.51,1214.30 1114.32,1214.30 1114.32,1214.18 1118.12,1214.18 1118.12,1214.06 1121.92,1214.06 1121.92,1213.94 1125.73,1213.94 1125.73,1213.82 1129.53,1213.82 1129.53,1209.82 1133.33,1209.82 1133.33,1209.64 1137.13,1209.64 1137.13,1209.46 1140.94,1209.46 1140.94,1209.28 1144.74,1209.28 1144.74,1209.09 1148.54,1209.09 1148.54,1208.91 1152.35,1208.91 1152.35,1208.73 1156.15,1208.73 1156.15,1208.55 1159.95,1208.55 1159.95,1208.37 1163.76,1208.37 1163.76,1208.18 1167.56,1208.18 1167.56,1208.00 1171.36,1208.00 1171.36,1207.82 1175.16,1207.82 1175.16,1204.00 1178.97,1204.00 1178.97,1203.77 1182.77,1203.77 1182.77,1203.54 1186.57,1203.54 1186.57,1203.31 1190.38,1203.31 1190.38,1203.08 1194.18,1203.08 1194.18,1202.85 1197.98,1202.85 1197.98,1202.62 1201.78,1202.62 1201.78,1202.39 1205.59,1202.39 1205.59,1202.15 1209.39,1202.15 1209.39,1201.92 1213.19,1201.92 1213.19,1201.69 1217.00,1201.69 1217.00,1201.46 1220.80,1201.46 1220.80,1198.19 1224.60,1198.19 1224.60,1197.96 1228.40,1197.96 1228.40,1197.73 1232.21,1197.73 1232.21,1197.49 1236.01,1197.49 1236.01,1197.26 1239.81,1197.26 1239.81,1197.03 1243.62,1197.03 1243.62,1196.80 1247.42,1196.80 1247.42,1196.57 1251.22,1196.57 1251.22,1196.34 1255.02,1196.34 1255.02,1196.11 1258.83,1196.11 1258.83,1195.88 1262.63,1195.88 1262.63,1195.64 1266.43,1195.64 1266.43,1191.28 1270.24,1191.28 1270.24,1191.00 1274.04,1191.00 1274.04,1190.71 1277.84,1190.71 1277.84,1190.43 1281.65,1190.43 1281.65,1190.14 1285.45,1190.14 1285.45,1189.86 1289.25,1189.86 1289.25,1189.57 1293.05,1189.57 1293.05,1189.29 1296.86,1189.29 1296.86,1189.00 1300.66,1189.00 1300.66,1188.72 1304.46,1188.72 1304.46,1188.43 1308.27,1188.43 1308.27,1188.15 1312.07,1188.15 1312.07,1187.86 1315.87,1187.86 1315.87,1187.58 1319.67,1187.58 1319.67,1187.29 1323.48,1187.29 1323.48,1187.01 1327.28,1187.01 1327.28,1186.72 1331.08,1186.72 1331.08,1186.44 1334.89,1186.44 1334.89,1186.15 1338.69,1186.15 1338.69,1185.87 1342.49,1185.87 1342.49,1185.58 1346.29,1185.58 1346.29,1185.22 1350.10,1185.22 1350.10,1184.82 1353.90,1184.82 1353.90,1184.42 1357.70,1184.42 1357.70,1184.01 1361.51,1184.01 1361.51,1183.61 1365.31,1183.61 1365.31,1183.20 1369.11,1183.20 1369.11,1182.80 1372.91,1182.80 1372.91,1182.40 1376.72,1182.40 1376.72,1181.99 1380.52,1181.99 1380.52,1181.59 1384.32,1181.59 1384.32,1181.18 1388.13,1181.18 1388.13,1180.78 1391.93,1180.78 1391.93,1180.38 1395.73,1180.38 1395.73,1179.97 1399.54,1179.97 1399.54,1179.57 1403.34,1179.57 1403.34,1179.17 1407.14,1179.17 1407.14,1178.76 1410.94,1178.76 1410.94,1178.36 1414.75,1178.36 1414.75,1177.95 1418.55,1177.95 1418.55,1177.55 1422.35,1177.55 1422.35,1177.15 1426.16,1177.15 1426.16,1176.74 1429.96,1176.74 1429.96,1176.34 1433.76,1176.34 1433.76,1175.93 1437.56,1175.93 1437.56,1175.53 1441.37,1175.53 1441.37,1175.13 1445.17,1175.13 1445.17,1174.72 1448.97,1174.72 1448.97,1174.32 1452.78,1174.32 1452.78,1173.91 1456.58,1173.91 1456.58,1173.51 1460.38,1173.51 1460.38,1173.11 1464.18,1173.11 1464.18,1172.70 1467.99,1172.70 1467.99,1172.30 1471.79,1172.30 1471.79,1171.90 1475.59,1171.90 1475.59,1171.46 1479.40,1171.46 1479.40,1170.98 1483.20,1170.98 1483.20,1170.51 1487.00,1170.51 1487.00,1170.03 1490.80,1170.03 1490.80,1169.55 1494.61,1169.55 1494.61,1169.07 1498.41,1169.07 1498.41,1168.59 1502.21,1168.59 1502.21,1168.11 1506.02,1168.11 1506.02,1167.64 1509.82,1167.64 1509.82,1167.16 1513.62,1167.16 1513.62,1166.68 1517.43,1166.68 1517.43,1166.20 1521.23,1166.20 1521.23,1165.72 1525.03,1165.72 1525.03,1165.24 1528.83,1165.24 1528.83,1164.77 1532.64,1164.77 1532.64,1164.29 1536.44,1164.29 1536.44,1163.81 1540.24,1163.81 1540.24,1163.33 1544.05,1163.33 1544.05,1162.85 1547.85,1162.85 1547.85,1162.37 1551.65,1162.37 1551.65,1161.90 1555.45,1161.90 1555.45,1161.42 1559.26,1161.42 1559.26,1160.94 1563.06,1160.94 1563.06,1160.46 1566.86,1160.46 1566.86,1159.98 1570.67,1159.98 1570.67,1159.50 1574.47,1159.50 1574.47,1159.03 1578.27,1159.03 1578.27,1158.55 1582.07,1158.55 1582.07,1158.07 1585.88,1158.07 1585.88,1157.59 1589.68,1157.59 1589.68,1157.11 1593.48,1157.11 1593.48,1156.63 1597.29,1156.63 1597.29,1156.16 1601.09,1156.16 1601.09,1155.68 1604.89,1155.68 1604.89,1155.17 1608.70,1155.17 1608.70,1154.54 1612.50,1154.54 1612.50,1153.91 1616.30,1153.91 1616.30,1153.28 1620.10,1153.28 1620.10,1152.65 1623.91,1152.65 1623.91,1152.02 1627.71,1152.02 1627.71,1151.39 1631.51,1151.39 1631.51,1150.76 1635.32,1150.76 1635.32,1150.13 1639.12,1150.13 1639.12,1149.50 1642.92,1149.50 1642.92,1148.87 1646.72,1148.87 1646.72,1148.24 1650.53,1148.24 1650.53,1147.61 1654.33,1147.61 1654.33,1146.98 1658.13,1146.98 1658.13,1146.35 1661.94,1146.35 1661.94,1145.71 1665.74,1145.71 1665.74,1145.08 1669.54,1145.08 1669.54,1144.45 1673.34,1144.45 1673.34,1143.82 1677.15,1143.82 1677.15,1143.19 1680.95,1143.19 1680.95,1142.56 1684.75,1142.56 1684.75,1141.93 1688.56,1141.93 1688.56,1141.30 1692.36,1141.30 1692.36,1140.67 1696.16,1140.67 1696.16,1140.04 1699.96,1140.04 1699.96,1139.41 1703.77,1139.41 1703.77,1138.78 1707.57,1138.78 1707.57,1138.15 1711.37,1138.15 1711.37,1137.52 1715.18,1137.52 1715.18,1136.89 1718.98,1136.89 1718.98,1136.26 1722.78,1136.26 1722.78,1135.63 1726.59,1135.63 1726.59,1135.00 1730.39,1135.00 1730.39,1134.37 1734.19,1134.37 1734.19,1133.74 1737.99,1133.74 1737.99,1133.11 1741.80,1133.11 1741.80,1132.48 1745.60,1132.48 1745.60,1131.85 1749.40,1131.85 1749.40,1131.22 1753.21,1131.22 1753.21,1130.59 1757.01,1130.59 1757.01,1129.96 1760.81,1129.96 1760.81,1129.33 1764.61,1129.33 1764.61,1128.68 1768.42,1128.68 1768.42,1127.83 1772.22,1127.83 1772.22,1126.98 1776.02,1126.98 1776.02,1126.13 1779.83,1126.13 1779.83,1125.28 1783.63,1125.28 1783.63,1124.43 1787.43,1124.43 1787.43,1123.58 1791.23,1123.58 1791.23,1122.73 1795.04,1122.73 1795.04,1121.88 1798.84,1121.88 1798.84,1121.03 1802.64,1121.03 1802.64,1120.18 1806.45,1120.18 1806.45,1119.33 1810.25,1119.33 1810.25,1118.48 1814.05,1118.48 1814.05,1117.63 1817.85,1117.63 1817.85,1116.78 1821.66,1116.78 1821.66,1115.93 1825.46,1115.93 1825.46,1115.08 1829.26,1115.08 1829.26,1114.23 1833.07,1114.23 1833.07,1113.38 1836.87,1113.38 1836.87,1112.53 1840.67,1112.53 1840.67,1111.68 1844.48,1111.68 1844.48,1110.74 1848.28,1110.74 1848.28,1109.80 1852.08,1109.80 1852.08,1108.86 1855.88,1108.86 1855.88,1107.92 1859.69,1107.92 1859.69,1106.99 1863.49,1106.99 1863.49,1106.05 1867.29,1106.05 1867.29,1105.20 1871.10,1105.20 1871.10,1104.37 1874.90,1104.37 1874.90,1103.54 1878.70,1103.54 1878.70,1102.71 1882.50,1102.71 1882.50,1101.88 1886.31,1101.88 1886.31,1101.06 1890.11,1101.06 1890.11,1100.23 1893.91,1100.23 1893.91,1099.40 1897.72,1099.40 1897.72,1098.57 1901.52,1098.57 1901.52,1097.74 1905.32,1097.74 1905.32,1096.91 1909.12,1096.91 1909.12,1096.09 1912.93,1096.09 1912.93,1095.26 1916.73,1095.26 1916.73,1094.43 1920.53,1094.43 1920.53,1093.60 1924.34,1093.60 1924.34,1092.77 1928.14,1092.77 1928.14,1091.82 1931.94,1091.82 1931.94,1090.87 1935.74,1090.87 1935.74,1089.92 1939.55,1089.92 1939.55,1088.97 1943.35,1088.97 1943.35,1088.01 1947.15,1088.01 1947.15,1087.06 1950.96,1087.06 1950.96,1086.11 1954.76,1086.11 1954.76,1085.16 1958.56,1085.16 1958.56,1084.21 1962.37,1084.21 1962.37,1083.25 1966.17,1083.25 1966.17,1082.30 1969.97,1082.30 1969.97,1081.35 1973.77,1081.35 1973.77,1080.40 1977.58,1080.40 1977.58,1079.45 1981.38,1079.45 1981.38,1078.49 1985.18,1078.49 1985.18,1077.54 1988.99,1077.54 1988.99,1076.59 1992.79,1076.59 1992.79,1075.64 1996.59,1075.64 1996.59,1074.69 2000.39,1074.69 2000.39,1073.73 2004.20,1073.73 2004.20,1072.78 2008.00,1072.78 2008.00,1216.00 1091.50,1216.00"/>
<polygon fill="#fe7a52" points="1091.50,1214.91 1095.30,1214.91 1095.30,1214.83 1099.11,1214.83 1099.11,1214.75 1102.91,1214.75 1102.91,1214.67 1106.71,1214.67 1106.71,1214.59 1110.51,1214.59 1110.51,1214.51 1114.32,1214.51 1114.32,1214.42 1118.12,1214.42 1118.12,1214.34 1121.92,1214.34 1121.92,1214.26 1125.73,1214.26 1125.73,1214.18 1129.53,1214.18 1129.53,1212.37 1133.33,1212.37 1133.33,1212.37 1137.13,1212.37 1137.13,1212.37 1140.94,1212.37 1140.94,1212.37 1144.74,1212.37 1144.74,1212.37 1148.54,1212.37 1148.54,1212.37 1152.35,1212.37 1152.35,1212.37 1156.15,1212.37 1156.15,1212.37 1159.95,1212.37 1159.95,1212.37 1163.76,1212.37 1163.76,1212.37 1167.56,1212.37 1167.56,1212.37 1171.36,1212.37 1171.36,1212.37 1175.16,1212.37 1175.16,1208.37 1178.97,1208.37 1178.97,1208.33 1182.77,1208.33 1182.77,1208.30 1186.57,1208.30 1186.57,1208.27 1190.38,1208.27 1190.38,1208.23 1194.18,1208.23 1194.18,1208.20 1197.98,1208.20 1197.98,1208.17 1201.78,1208.17 1201.78,1208.14 1205.59,1208.14 1205.59,1208.10 1209.39,1208.10 1209.39,1208.07 1213.19,1208.07 1213.19,1208.04 1217.00,1208.04 1217.00,1208.00 1220.80,1208.00 1220.80,1204.00 1224.60,1204.00 1224.60,1204.00 1228.40,1204.00 1228.40,1204.00 1232.21,1204.00 1232.21,1204.00 1236.01,1204.00 1236.01,1204.00 1239.81,1204.00 1239.81,1204.00 1243.62,1204.00 1243.62,1204.00 1247.42,1204.00 1247.42,1204.00 1251.22,1204.00 1251.22,1204.00 1255.02,1204.00 1255.02,1204.00 1258.83,1204.00 1258.83,1204.00 1262.63,1204.00 1262.63,1204.00 1266.43,1204.00 1266.43,1200.73 1270.24,1200.73 1270.24,1200.70 1274.04,1200.70 1274.04,1200.66 1277.84,1200.66 1277.84,1200.63 1281.65,1200.63 1281.65,1200.59 1285.45,1200.59 1285.45,1200.55 1289.25,1200.55 1289.25,1200.52 1293.05,1200.52 1293.05,1200.48 1296.86,1200.48 1296.86,1200.45 1300.66,1200.45 1300.66,1200.41 1304.46,1200.41 1304.46,1200.38 1308.27,1200.38 1308.27,1200.34 1312.07,1200.34 1312.07,1200.31 1315.87,1200.31 1315.87,1200.27 1319.67,1200.27 1319.67,1200.23 1323.48,1200.23 1323.48,1200.20 1327.28,1200.20 1327.28,1200.16 1331.08,1200.16 1331.08,1200.13 1334.89,1200.13 1334.89,1200.09 1338.69,1200.09 1338.69,1200.06 1342.49,1200.06 1342.49,1200.02 1346.29,1200.02 1346.29,1200.00 1350.10,1200.00 1350.10,1199.99 1353.90,1199.99 1353.90,1199.98 1357.70,1199.98 1357.70,1199.97 1361.51,1199.97 1361.51,1199.96 1365.31,1199.96 1365.31,1199.95 1369.11,1199.95 1369.11,1199.94 1372.91,1199.94 1372.91,1199.93 1376.72,1199.93 1376.72,1199.91 1380.52,1199.91 1380.52,1199.90 1384.32,1199.90 1384.32,1199.89 1388.13,1199.89 1388.13,1199.88 1391.93,1199.88 1391.93,1199.87 1395.73,1199.87 1395.73,1199.86 1399.54,1199.86 1399.54,1199.85 1403.34,1199.85 1403.34,1199.84 1407.14,1199.84 1407.14,1199.83 1410.94,1199.83 1410.94,1199.82 1414.75,1199.82 1414.75,1199.81 1418.55,1199.81 1418.55,1199.80 1422.35,1199.80 1422.35,1199.79 1426.16,1199.79 1426.16,1199.78 1429.96,1199.78 1429.96,1199.77 1433.76,1199.77 1433.76,1199.76 1437.56,1199.76 1437.56,1199.74 1441.37,1199.74 1441.37,1199.73 1445.17,1199.73 1445.17,1199.72 1448.97,1199.72 1448.97,1199.71 1452.78,1199.71 1452.78,1199.70 1456.58,1199.70 1456.58,1199.69 1460.38,1199.69 1460.38,1199.68 1464.18,1199.68 1464.18,1199.67 1467.99,1199.67 1467.99,1199.66 1471.79,1199.66 1471.79,1199.65 1475.59,1199.65 1475.59,1199.63 1479.40,1199.63 1479.40,1199.61 1483.20,1199.61 1483.20,1199.59 1487.00,1199.59 1487.00,1199.57 1490.80,1199.57 1490.80,1199.55 1494.61,1199.55 1494.61,1199.53 1498.41,1199.53 1498.41,1199.51 1502.21,1199.51 1502.21,1199.49 1506.02,1199.49 1506.02,1199.46 1509.82,1199.46 1509.82,1199.44 1513.62,1199.44 1513.62,1199.42 1517.43,1199.42 1517.43,1199.40 1521.23,1199.40 1521.23,1199.38 1525.03,1199.38 1525.03,1199.36 1528.83,1199.36 1528.83,1199.34 1532.64,1199.34 1532.64,1199.32 1536.44,1199.32 1536.44,1199.29 1540.24,1199.29 1540.24,1199.27 1544.05,1199.27 1544.05,1199.25 1547.85,1199.25 1547.85,1199.23 1551.65,1199.23 1551.65,1199.21 1555.45,1199.21 1555.45,1199.19 1559.26,1199.19 1559.26,1199.17 1563.06,1199.17 1563.06,1199.15 1566.86,1199.15 1566.86,1199.12 1570.67,1199.12 1570.67,1199.10 1574.47,1199.10 1574.47,1199.08 1578.27,1199.08 1578.27,1199.06 1582.07,1199.06 1582.07,1199.04 1585.88,1199.04 1585.88,1199.02 1589.68,1199.02 1589.68,1199.00 1593.48,1199.00 1593.48,1198.98 1597.29,1198.98 1597.29,1198.95 1601.09,1198.95 1601.09,1198.93 1604.89,1198.93 1604.89,1198.92 1608.70,1198.92 1608.70,1198.92 1612.50,1198.92 1612.50,1198.92 1616.30,1198.92 1616.30,1198.92 1620.10,1198.92 1620.10,1198.92 1623.91,1198.92 1623.91,1198.92 1627.71,1198.92 1627.71,1198.92 1631.51,1198.92 1631.51,1198.92 1635.32,1198.92 1635.32,1198.92 1639.12,1198.92 1639.12,1198.92 1642.92,1198.92 1642.92,1198.92 1646.72,1198.92 1646.72,1198.92 1650.53,1198.92 1650.53,1198.92 1654.33,1198.92 1654.33,1198.92 1658.13,1198.92 1658.13,1198.92 1661.94,1198.92 1661.94,1198.92 1665.74,1198.92 1665.74,1198.92 1669.54,1198.92 1669.54,1198.92 1673.34,1198.92 1673.34,1198.92 1677.15,1198.92 1677.15,1198.92 1680.95,1198.92 1680.95,1198.92 1684.75,1198.92 1684.75,1198.92 1688.56,1198.92 1688.56,1198.92 1692.36,1198.92 1692.36,1198.92 1696.16,1198.92 1696.16,1198.92 1699.96,1198.92 1699.96,1198.92 1703.77,1198.92 1703.77,1198.92 1707.57,1198.92 1707.57,1198.92 1711.37,1198.92 1711.37,1198.92 1715.18,1198.92 1715.18,1198.92 1718.98,1198.92 1718.98,1198.92 1722.78,1198.92 1722.78,1198.92 1726.59,1198.92 1726.59,1198.92 1730.39,1198.92 1730.39,1198.92 1734.19,1198.92 1734.19,1198.92 1737.99,1198.92 1737.99,1198.92 1741.80,1198.92 1741.80,1198.92 1745.60,1198.92 1745.60,1198.92 1749.40,1198.92 1749.40,1198.92 1753.21,1198.92 1753.21,1198.92 1757.01,1198.92 1757.01,1198.92 1760.81,1198.92 1760.81,1198.92 1764.61,1198.92 1764.61,1198.92 1768.42,1198.92 1768.42,1198.92 1772.22,1198.92 1772.22,1198.92 1776.02,1198.92 1776.02,1198.92 1779.83,1198.92 1779.83,1198.92 1783.63,1198.92 1783.63,1198.92 1787.43,1198.92 1787.43,1198.92 1791.23,1198.92 1791.23,1198.92 1795.04,1198.92 1795.04,1198.92 1798.84,1198.92 1798.84,1198.92 1802.64,1198.92 1802.64,1198.92 1806.45,1198.92 1806.45,1198.92 1810.25,1198.92 1810.25,1198.92 1814.05,1198.92 1814.05,1198.92 1817.85,1198.92 1817.85,1198.92 1821.66,1198.92 1821.66,1198.92 1825.46,1198.92 1825.46,1198.92 1829.26,1198.92 1829.26,1198.92 1833.07,1198.92 1833.07,1198.92 1836.87,1198.92 1836.87,1198.92 1840.67,1198.92 1840.67,1198.92 1844.48,1198.92 1844.48,1198.92 1848.28,1198.92 1848.28,1198.92 1852.08,1198.92 1852.08,1198.92 1855.88,1198.92 1855.88,1198.92 1859.69,1198.92 1859.69,1198.92 1863.49,1198.92 1863.49,1198.92 1867.29,1198.92 1867.29,1198.92 1871.10,1198.92 1871.10,1198.92 1874.90,1198.92 1874.90,1198.92 1878.70,1198.92 1878.70,1198.92 1882.50,1198.92 1882.50,1198.92 1886.31,1198.92 1886.31,1198.92 1890.11,1198.92 1890.11,1198.92 1893.91,1198.92 1893.91,1198.92 1897.72,1198.92 1897.72,1198.92 1901.52,1198.92 1901.52,1198.92 1905.32,1198.92 1905.32,1198.92 1909.12,1198.92 1909.12,1198.92 1912.93,1198.92 1912.93,1198.92 1916.73,1198.92 1916.73,1198.92 1920.53,1198.92 1920.53,1198.92 1924.34,1198.92 1924.34,1198.92 1928.14,1198.92 1928.14,1198.92 1931.94,1198.92 1931.94,1198.92 1935.74,1198.92 1935.74,1198.92 1939.55,1198.92 1939.55,1198.92 1943.35,1198.92 1943.35,1198.92 1947.15,1198.92 1947.15,1198.92 1950.96,1198.92 1950.96,1198.92 1954.76,1198.92 1954.76,1198.92 1958.56,1198.92 1958.56,1198.92 1962.37,1198.92 1962.37,1198.92 1966.17,1198.92 1966.17,1198.92 1969.97,1198.92 1969.97,1198.92 1973.77,1198.92 1973.77,1198.92 1977.58,1198.92 1977.58,1198.92 1981.38,1198.92 1981.38,1198.92 1985.18,1198.92 1985.18,1198.92 1988.99,1198.92 1988.99,1198.92 1992.79,1198.92 1992.79,1198.92 1996.59,1198.92 1996.59,1198.92 2000.39,1198.92 2000.39,1198.92 2004.20,1198.92 2004.20,1198.92 2008.00,1198.92 2008.00,1216.00 1091.50,1216.00"/>
<path d="M1095.30 852.5V1216 M1099.11 852.5V1216 M1102.91 852.5V1216 M1106.71 852.5V1216 M1110.51 852.5V1216 M1114.32 852.5V1216 M1118.12 852.5V1216 M1121.92 852.5V1216 M1125.73 852.5V1216 M1129.53 852.5V1216 M1133.33 852.5V1216 M1137.13 852.5V1216 M1140.94 852.5V1216 M1144.74 852.5V1216 M1148.54 852.5V1216 M1152.35 852.5V1216 M1156.15 852.5V1216 M1159.95 852.5V1216 M1163.76 852.5V1216 M1167.56 852.5V1216 M1171.36 852.5V1216 M1175.16 852.5V1216 M1178.97 852.5V1216 M1182.77 852.5V1216 M1186.57 852.5V1216 M1190.38 852.5V1216 M1194.18 852.5V1216 M1197.98 852.5V1216 M1201.78 852.5V1216 M1205.59 852.5V1216 M1209.39 852.5V1216 M1213.19 852.5V1216 M1217.00 852.5V1216 M1220.80 852.5V1216 M1224.60 852.5V1216 M1228.40 852.5V1216 M1232.21 852.5V1216 M1236.01 852.5V1216 M1239.81 852.5V1216 M1243.62 852.5V1216 M1247.42 852.5V1216 M1251.22 852.5V1216 M1255.02 852.5V1216 M1258.83 852.5V1216 M1262.63 852.5V1216 M1266.43 852.5V1216 M1270.24 852.5V1216 M1274.04 852.5V1216 M1277.84 852.5V1216 M1281.65 852.5V1216 M1285.45 852.5V1216 M1289.25 852.5V1216 M1293.05 852.5V1216 M1296.86 852.5V1216 M1300.66 852.5V1216 M1304.46 852.5V1216 M1308.27 852.5V1216 M1312.07 852.5V1216 M1315.87 852.5V1216 M1319.67 852.5V1216 M1323.48 852.5V1216 M1327.28 852.5V1216 M1331.08 852.5V1216 M1334.89 852.5V1216 M1338.69 852.5V1216 M1342.49 852.5V1216 M1346.29 852.5V1216 M1350.10 852.5V1216 M1353.90 852.5V1216 M1357.70 852.5V1216 M1361.51 852.5V1216 M1365.31 852.5V1216 M1369.11 852.5V1216 M1372.91 852.5V1216 M1376.72 852.5V1216 M1380.52 852.5V1216 M1384.32 852.5V1216 M1388.13 852.5V1216 M1391.93 852.5V1216 M1395.73 852.5V1216 M1399.54 852.5V1216 M1403.34 852.5V1216 M1407.14 852.5V1216 M1410.94 852.5V1216 M1414.75 852.5V1216 M1418.55 852.5V1216 M1422.35 852.5V1216 M1426.16 852.5V1216 M1429.96 852.5V1216 M1433.76 852.5V1216 M1437.56 852.5V1216 M1441.37 852.5V1216 M1445.17 852.5V1216 M1448.97 852.5V1216 M1452.78 852.5V1216 M1456.58 852.5V1216 M1460.38 852.5V1216 M1464.18 852.5V1216 M1467.99 852.5V1216 M1471.79 852.5V1216 M1475.59 852.5V1216 M1479.40 852.5V1216 M1483.20 852.5V1216 M1487.00 852.5V1216 M1490.80 852.5V1216 M1494.61 852.5V1216 M1498.41 852.5V1216 M1502.21 852.5V1216 M1506.02 852.5V1216 M1509.82 852.5V1216 M1513.62 852.5V1216 M1517.43 852.5V1216 M1521.23 852.5V1216 M1525.03 852.5V1216 M1528.83 852.5V1216 M1532.64 852.5V1216 M1536.44 852.5V1216 M1540.24 852.5V1216 M1544.05 852.5V1216 M1547.85 852.5V1216 M1551.65 852.5V1216 M1555.45 852.5V1216 M1559.26 852.5V1216 M1563.06 852.5V1216 M1566.86 852.5V1216 M1570.67 852.5V1216 M1574.47 852.5V1216 M1578.27 852.5V1216 M1582.07 852.5V1216 M1585.88 852.5V1216 M1589.68 852.5V1216 M1593.48 852.5V1216 M1597.29 852.5V1216 M1601.09 852.5V1216 M1604.89 852.5V1216 M1608.70 852.5V1216 M1612.50 852.5V1216 M1616.30 852.5V1216 M1620.10 852.5V1216 M1623.91 852.5V1216 M1627.71 852.5V1216 M1631.51 852.5V1216 M1635.32 852.5V1216 M1639.12 852.5V1216 M1642.92 852.5V1216 M1646.72 852.5V1216 M1650.53 852.5V1216 M1654.33 852.5V1216 M1658.13 852.5V1216 M1661.94 852.5V1216 M1665.74 852.5V1216 M1669.54 852.5V1216 M1673.34 852.5V1216 M1677.15 852.5V1216 M1680.95 852.5V1216 M1684.75 852.5V1216 M1688.56 852.5V1216 M1692.36 852.5V1216 M1696.16 852.5V1216 M1699.96 852.5V1216 M1703.77 852.5V1216 M1707.57 852.5V1216 M1711.37 852.5V1216 M1715.18 852.5V1216 M1718.98 852.5V1216 M1722.78 852.5V1216 M1726.59 852.5V1216 M1730.39 852.5V1216 M1734.19 852.5V1216 M1737.99 852.5V1216 M1741.80 852.5V1216 M1745.60 852.5V1216 M1749.40 852.5V1216 M1753.21 852.5V1216 M1757.01 852.5V1216 M1760.81 852.5V1216 M1764.61 852.5V1216 M1768.42 852.5V1216 M1772.22 852.5V1216 M1776.02 852.5V1216 M1779.83 852.5V1216 M1783.63 852.5V1216 M1787.43 852.5V1216 M1791.23 852.5V1216 M1795.04 852.5V1216 M1798.84 852.5V1216 M1802.64 852.5V1216 M1806.45 852.5V1216 M1810.25 852.5V1216 M1814.05 852.5V1216 M1817.85 852.5V1216 M1821.66 852.5V1216 M1825.46 852.5V1216 M1829.26 852.5V1216 M1833.07 852.5V1216 M1836.87 852.5V1216 M1840.67 852.5V1216 M1844.48 852.5V1216 M1848.28 852.5V1216 M1852.08 852.5V1216 M1855.88 852.5V1216 M1859.69 852.5V1216 M1863.49 852.5V1216 M1867.29 852.5V1216 M1871.10 852.5V1216 M1874.90 852.5V1216 M1878.70 852.5V1216 M1882.50 852.5V1216 M1886.31 852.5V1216 M1890.11 852.5V1216 M1893.91 852.5V1216 M1897.72 852.5V1216 M1901.52 852.5V1216 M1905.32 852.5V1216 M1909.12 852.5V1216 M1912.93 852.5V1216 M1916.73 852.5V1216 M1920.53 852.5V1216 M1924.34 852.5V1216 M1928.14 852.5V1216 M1931.94 852.5V1216 M1935.74 852.5V1216 M1939.55 852.5V1216 M1943.35 852.5V1216 M1947.15 852.5V1216 M1950.96 852.5V1216 M1954.76 852.5V1216 M1958.56 852.5V1216 M1962.37 852.5V1216 M1966.17 852.5V1216 M1969.97 852.5V1216 M1973.77 852.5V1216 M1977.58 852.5V1216 M1981.38 852.5V1216 M1985.18 852.5V1216 M1988.99 852.5V1216 M1992.79 852.5V1216 M1996.59 852.5V1216 M2000.39 852.5V1216 M2004.20 852.5V1216" stroke="#fff" stroke-opacity="0.36" stroke-width="1"/>
<line x1="1091.5" x2="2008" y1="1143.3" y2="1143.3" stroke="#000" stroke-opacity="0.05" stroke-width="1"/>
<line x1="1091.5" x2="2008" y1="1070.6" y2="1070.6" stroke="#000" stroke-opacity="0.05" stroke-width="1"/>
<line x1="1091.5" x2="2008" y1="997.9" y2="997.9" stroke="#000" stroke-opacity="0.05" stroke-width="1"/>
<line x1="1091.5" x2="2008" y1="925.2" y2="925.2" stroke="#000" stroke-opacity="0.05" stroke-width="1"/>
<path d="M1093.40 1217V1222 M1097.20 1217V1222 M1101.01 1217V1222 M1104.81 1217V1222 M1108.61 1217V1222 M1112.42 1217V1222 M1116.22 1217V1222 M1120.02 1217V1222 M1123.82 1217V1222 M1127.63 1217V1222 M1131.43 1217V1222 M1135.23 1217V1222 M1139.04 1217V1222 M1142.84 1217V1222 M1146.64 1217V1222 M1150.45 1217V1222 M1154.25 1217V1222 M1158.05 1217V1222 M1161.85 1217V1222 M1165.66 1217V1222 M1169.46 1217V1222 M1173.26 1217V1222 M1177.07 1217V1222 M1180.87 1217V1222 M1184.67 1217V1222 M1188.47 1217V1222 M1192.28 1217V1222 M1196.08 1217V1222 M1199.88 1217V1222 M1203.69 1217V1222 M1207.49 1217V1222 M1211.29 1217V1222 M1215.09 1217V1222 M1218.90 1217V1222 M1222.70 1217V1222 M1226.50 1217V1222 M1230.31 1217V1222 M1234.11 1217V1222 M1237.91 1217V1222 M1241.71 1217V1222 M1245.52 1217V1222 M1249.32 1217V1222 M1253.12 1217V1222 M1256.93 1217V1222 M1260.73 1217V1222 M1264.53 1217V1222 M1268.34 1217V1222 M1272.14 1217V1222 M1275.94 1217V1222 M1279.74 1217V1222 M1283.55 1217V1222 M1287.35 1217V1222 M1291.15 1217V1222 M1294.96 1217V1222 M1298.76 1217V1222 M1302.56 1217V1222 M1306.36 1217V1222 M1310.17 1217V1222 M1313.97 1217V1222 M1317.77 1217V1222 M1321.58 1217V1222 M1325.38 1217V1222 M1329.18 1217V1222 M1332.98 1217V1222 M1336.79 1217V1222 M1340.59 1217V1222 M1344.39 1217V1222 M1348.20 1217V1222 M1352.00 1217V1222 M1355.80 1217V1222 M1359.60 1217V1222 M1363.41 1217V1222 M1367.21 1217V1222 M1371.01 1217V1222 M1374.82 1217V1222 M1378.62 1217V1222 M1382.42 1217V1222 M1386.23 1217V1222 M1390.03 1217V1222 M1393.83 1217V1222 M1397.63 1217V1222 M1401.44 1217V1222 M1405.24 1217V1222 M1409.04 1217V1222 M1412.85 1217V1222 M1416.65 1217V1222 M1420.45 1217V1222 M1424.25 1217V1222 M1428.06 1217V1222 M1431.86 1217V1222 M1435.66 1217V1222 M1439.47 1217V1222 M1443.27 1217V1222 M1447.07 1217V1222 M1450.87 1217V1222 M1454.68 1217V1222 M1458.48 1217V1222 M1462.28 1217V1222 M1466.09 1217V1222 M1469.89 1217V1222 M1473.69 1217V1222 M1477.49 1217V1222 M1481.30 1217V1222 M1485.10 1217V1222 M1488.90 1217V1222 M1492.71 1217V1222 M1496.51 1217V1222 M1500.31 1217V1222 M1504.12 1217V1222 M1507.92 1217V1222 M1511.72 1217V1222 M1515.52 1217V1222 M1519.33 1217V1222 M1523.13 1217V1222 M1526.93 1217V1222 M1530.74 1217V1222 M1534.54 1217V1222 M1538.34 1217V1222 M1542.14 1217V1222 M1545.95 1217V1222 M1549.75 1217V1222 M1553.55 1217V1222 M1557.36 1217V1222 M1561.16 1217V1222 M1564.96 1217V1222 M1568.76 1217V1222 M1572.57 1217V1222 M1576.37 1217V1222 M1580.17 1217V1222 M1583.98 1217V1222 M1587.78 1217V1222 M1591.58 1217V1222 M1595.38 1217V1222 M1599.19 1217V1222 M1602.99 1217V1222 M1606.79 1217V1222 M1610.60 1217V1222 M1614.40 1217V1222 M1618.20 1217V1222 M1622.01 1217V1222 M1625.81 1217V1222 M1629.61 1217V1222 M1633.41 1217V1222 M1637.22 1217V1222 M1641.02 1217V1222 M1644.82 1217V1222 M1648.63 1217V1222 M1652.43 1217V1222 M1656.23 1217V1222 M1660.03 1217V1222 M1663.84 1217V1222 M1667.64 1217V1222 M1671.44 1217V1222 M1675.25 1217V1222 M1679.05 1217V1222 M1682.85 1217V1222 M1686.65 1217V1222 M1690.46 1217V1222 M1694.26 1217V1222 M1698.06 1217V1222 M1701.87 1217V1222 M1705.67 1217V1222 M1709.47 1217V1222 M1713.27 1217V1222 M1717.08 1217V1222 M1720.88 1217V1222 M1724.68 1217V1222 M1728.49 1217V1222 M1732.29 1217V1222 M1736.09 1217V1222 M1739.90 1217V1222 M1743.70 1217V1222 M1747.50 1217V1222 M1751.30 1217V1222 M1755.11 1217V1222 M1758.91 1217V1222 M1762.71 1217V1222 M1766.52 1217V1222 M1770.32 1217V1222 M1774.12 1217V1222 M1777.92 1217V1222 M1781.73 1217V1222 M1785.53 1217V1222 M1789.33 1217V1222 M1793.14 1217V1222 M1796.94 1217V1222 M1800.74 1217V1222 M1804.54 1217V1222 M1808.35 1217V1222 M1812.15 1217V1222 M1815.95 1217V1222 M1819.76 1217V1222 M1823.56 1217V1222 M1827.36 1217V1222 M1831.16 1217V1222 M1834.97 1217V1222 M1838.77 1217V1222 M1842.57 1217V1222 M1846.38 1217V1222 M1850.18 1217V1222 M1853.98 1217V1222 M1857.79 1217V1222 M1861.59 1217V1222 M1865.39 1217V1222 M1869.19 1217V1222 M1873.00 1217V1222 M1876.80 1217V1222 M1880.60 1217V1222 M1884.41 1217V1222 M1888.21 1217V1222 M1892.01 1217V1222 M1895.81 1217V1222 M1899.62 1217V1222 M1903.42 1217V1222 M1907.22 1217V1222 M1911.03 1217V1222 M1914.83 1217V1222 M1918.63 1217V1222 M1922.43 1217V1222 M1926.24 1217V1222 M1930.04 1217V1222 M1933.84 1217V1222 M1937.65 1217V1222 M1941.45 1217V1222 M1945.25 1217V1222 M1949.05 1217V1222 M1952.86 1217V1222 M1956.66 1217V1222 M1960.46 1217V1222 M1964.27 1217V1222 M1968.07 1217V1222 M1971.87 1217V1222 M1975.68 1217V1222 M1979.48 1217V1222 M1983.28 1217V1222 M1987.08 1217V1222 M1990.89 1217V1222 M1994.69 1217V1222 M1998.49 1217V1222 M2002.30 1217V1222 M2006.10 1217V1222" stroke="#e4e4e4" stroke-width="1.6"/>
<text x="1087.0" y="1221.0" text-anchor="end" font-size="14.3" fill="#3f5f63" font-family="Liberation Sans" letter-spacing="-0.5">0%</text>
<text x="1087.0" y="1148.3" text-anchor="end" font-size="14.3" fill="#3f5f63" font-family="Liberation Sans" letter-spacing="-0.5">20%</text>
<text x="1087.0" y="1075.6" text-anchor="end" font-size="14.3" fill="#3f5f63" font-family="Liberation Sans" letter-spacing="-0.5">40%</text>
<text x="1087.0" y="1002.9" text-anchor="end" font-size="14.3" fill="#3f5f63" font-family="Liberation Sans" letter-spacing="-0.5">60%</text>
<text x="1087.0" y="930.2" text-anchor="end" font-size="14.3" fill="#3f5f63" font-family="Liberation Sans" letter-spacing="-0.5">80%</text>
<text x="1087.0" y="857.5" text-anchor="end" font-size="14.3" fill="#3f5f63" font-family="Liberation Sans" letter-spacing="-0.5">100%</text>
<text transform="translate(1097.00,1226) rotate(-90)" text-anchor="end" font-size="15.5" fill="#3f5f63" font-family="Liberation Sans" letter-spacing="-0.6">0</text>
<text transform="translate(1127.42,1226) rotate(-90)" text-anchor="end" font-size="15.5" fill="#3f5f63" font-family="Liberation Sans" letter-spacing="-0.6">8</text>
<text transform="translate(1157.85,1226) rotate(-90)" text-anchor="end" font-size="15.5" fill="#3f5f63" font-family="Liberation Sans" letter-spacing="-0.6">16</text>
<text transform="translate(1188.27,1226) rotate(-90)" text-anchor="end" font-size="15.5" fill="#3f5f63" font-family="Liberation Sans" letter-spacing="-0.6">24</text>
<text transform="translate(1218.69,1226) rotate(-90)" text-anchor="end" font-size="15.5" fill="#3f5f63" font-family="Liberation Sans" letter-spacing="-0.6">32</text>
<text transform="translate(1249.12,1226) rotate(-90)" text-anchor="end" font-size="15.5" fill="#3f5f63" font-family="Liberation Sans" letter-spacing="-0.6">40</text>
<text transform="translate(1279.54,1226) rotate(-90)" text-anchor="end" font-size="15.5" fill="#3f5f63" font-family="Liberation Sans" letter-spacing="-0.6">48</text>
<text transform="translate(1309.96,1226) rotate(-90)" text-anchor="end" font-size="15.5" fill="#3f5f63" font-family="Liberation Sans" letter-spacing="-0.6">56</text>
<text transform="translate(1340.39,1226) rotate(-90)" text-anchor="end" font-size="15.5" fill="#3f5f63" font-family="Liberation Sans" letter-spacing="-0.6">64</text>
<text transform="translate(1370.81,1226) rotate(-90)" text-anchor="end" font-size="15.5" fill="#3f5f63" font-family="Liberation Sans" letter-spacing="-0.6">72</text>
<text transform="translate(1401.23,1226) rotate(-90)" text-anchor="end" font-size="15.5" fill="#3f5f63" font-family="Liberation Sans" letter-spacing="-0.6">80</text>
<text transform="translate(1431.66,1226) rotate(-90)" text-anchor="end" font-size="15.5" fill="#3f5f63" font-family="Liberation Sans" letter-spacing="-0.6">88</text>
<text transform="translate(1462.08,1226) rotate(-90)" text-anchor="end" font-size="15.5" fill="#3f5f63" font-family="Liberation Sans" letter-spacing="-0.6">96</text>
<text transform="translate(1492.50,1226) rotate(-90)" text-anchor="end" font-size="15.5" fill="#3f5f63" font-family="Liberation Sans" letter-spacing="-0.6">104</text>
<text transform="translate(1522.93,1226) rotate(-90)" text-anchor="end" font-size="15.5" fill="#3f5f63" font-family="Liberation Sans" letter-spacing="-0.6">112</text>
<text transform="translate(1553.35,1226) rotate(-90)" text-anchor="end" font-size="15.5" fill="#3f5f63" font-family="Liberation Sans" letter-spacing="-0.6">120</text>
<text transform="translate(1583.77,1226) rotate(-90)" text-anchor="end" font-size="15.5" fill="#3f5f63" font-family="Liberation Sans" letter-spacing="-0.6">128</text>
<text transform="translate(1614.20,1226) rotate(-90)" text-anchor="end" font-size="15.5" fill="#3f5f63" font-family="Liberation Sans" letter-spacing="-0.6">136</text>
<text transform="translate(1644.62,1226) rotate(-90)" text-anchor="end" font-size="15.5" fill="#3f5f63" font-family="Liberation Sans" letter-spacing="-0.6">144</text>
<text transform="translate(1675.04,1226) rotate(-90)" text-anchor="end" font-size="15.5" fill="#3f5f63" font-family="Liberation Sans" letter-spacing="-0.6">152</text>
<text transform="translate(1705.47,1226) rotate(-90)" text-anchor="end" font-size="15.5" fill="#3f5f63" font-family="Liberation Sans" letter-spacing="-0.6">160</text>
<text transform="translate(1735.89,1226) rotate(-90)" text-anchor="end" font-size="15.5" fill="#3f5f63" font-family="Liberation Sans" letter-spacing="-0.6">168</text>
<text transform="translate(1766.31,1226) rotate(-90)" text-anchor="end" font-size="15.5" fill="#3f5f63" font-family="Liberation Sans" letter-spacing="-0.6">176</text>
<text transform="translate(1796.74,1226) rotate(-90)" text-anchor="end" font-size="15.5" fill="#3f5f63" font-family="Liberation Sans" letter-spacing="-0.6">184</text>
<text transform="translate(1827.16,1226) rotate(-90)" text-anchor="end" font-size="15.5" fill="#3f5f63" font-family="Liberation Sans" letter-spacing="-0.6">192</text>
<text transform="translate(1857.58,1226) rotate(-90)" text-anchor="end" font-size="15.5" fill="#3f5f63" font-family="Liberation Sans" letter-spacing="-0.6">200</text>
<text transform="translate(1888.01,1226) rotate(-90)" text-anchor="end" font-size="15.5" fill="#3f5f63" font-family="Liberation Sans" letter-spacing="-0.6">208</text>
<text transform="translate(1918.43,1226) rotate(-90)" text-anchor="end" font-size="15.5" fill="#3f5f63" font-family="Liberation Sans" letter-spacing="-0.6">216</text>
<text transform="translate(1948.85,1226) rotate(-90)" text-anchor="end" font-size="15.5" fill="#3f5f63" font-family="Liberation Sans" letter-spacing="-0.6">224</text>
<text transform="translate(1979.28,1226) rotate(-90)" text-anchor="end" font-size="15.5" fill="#3f5f63" font-family="Liberation Sans" letter-spacing="-0.6">232</text>
<text transform="translate(2009.70,1226) rotate(-90)" text-anchor="end" font-size="15.5" fill="#3f5f63" font-family="Liberation Sans" letter-spacing="-0.6">240</text>
</svg>

  <!-- BOTTOM -->
  <div id="bottombar"></div>
  <svg class="abs" style="left:9px;top:1421px" width="28" height="24" viewBox="0 0 28 24"><path d="M2 1.4 H9.6 L11.2 3.4 H24.1 V7.6 H22.6 V6 H3.7 V17.5 H9.2 V19 H2 Z" fill="#2b2b2e"/><circle cx="17.5" cy="14.7" r="7" fill="#2b2b2e"/><path d="M14.2 16.9 L17.5 12.8 L20.8 16.9 Z" fill="#eeeeee"/></svg>
  <div class="abs" style="left:44px;top:1415px;width:218px;height:32px;background:#fff;border-left:1px solid #ddd;border-right:1px solid #ddd"></div>
  <div class="abs" style="left:239px;top:1430.5px;width:0;height:0;border-left:4px solid transparent;border-right:4px solid transparent;border-top:4px solid #444"></div>
  <div class="abs" style="left:262px;top:1415px;width:84px;height:32px;border-right:1px solid #ddd"></div>
  <div class="abs" style="left:322px;top:1430.5px;width:0;height:0;border-left:4px solid transparent;border-right:4px solid transparent;border-top:4px solid #444"></div>
  <div class="abs" style="left:1939px;top:1418px;width:79px;height:30px;background:#fc4b32;border-radius:3px"></div>
</div>
<svg style="position:absolute;left:0;top:0" width="2048" height="1447" font-family="Liberation Sans"><text x="176.43" y="39.70" font-size="18.75" fill="#e8eaed" textLength="226.38" lengthAdjust="spacingAndGlyphs" stroke="#e8eaed" stroke-width="0.35">LTC Demo Cases - 20221220</text>
<rect x="408.5" y="33" width="5.5" height="1.6" fill="#e8eaed" fill-opacity="0.35"/>
<text x="194.37" y="89.00" font-size="20.35" fill="#e8eaed" textLength="212.54" lengthAdjust="spacingAndGlyphs" stroke="#e8eaed" stroke-width="0.3">app.slopesoftware.com</text>
<text x="406.30" y="89.00" font-size="20.35" fill="#9aa0a6" textLength="450.04" lengthAdjust="spacingAndGlyphs">/ModelResults/FinancialProjection/DetailsTabView/</text>
<text x="136.73" y="146.10" font-size="14.53" fill="#444444" textLength="43.96" lengthAdjust="spacingAndGlyphs" stroke="#fff" stroke-width="0.2">HOME</text>
<text x="212.63" y="146.10" font-size="14.53" fill="#444444" textLength="63.09" lengthAdjust="spacingAndGlyphs" stroke="#fff" stroke-width="0.2">DEVELOP</text>
<text x="308.23" y="146.10" font-size="14.53" fill="#444444" textLength="48.83" lengthAdjust="spacingAndGlyphs" stroke="#fff" stroke-width="0.2">DEFINE</text>
<text x="389.33" y="146.10" font-size="14.53" fill="#444444" textLength="63.21" lengthAdjust="spacingAndGlyphs" stroke="#fff" stroke-width="0.2">MANAGE</text>
<text x="484.49" y="146.10" font-size="14.53" fill="#444444" textLength="59.56" lengthAdjust="spacingAndGlyphs" stroke="#fff" stroke-width="0.2">EXECUTE</text>
<text x="577.10" y="146.10" font-size="14.53" fill="#f4502f" textLength="61.90" lengthAdjust="spacingAndGlyphs" stroke="#fff" stroke-width="0.15">ANALYZE</text>
<text x="1807.90" y="144.90" font-size="14.53" fill="#3a3a3a" textLength="88.95" lengthAdjust="spacingAndGlyphs" stroke="#fff" stroke-width="0.12">Demo Tenant</text>
<text x="16.16" y="231.50" font-size="40.99" fill="#ffffff" textLength="468.71" lengthAdjust="spacingAndGlyphs" stroke="#06465e" stroke-width="1.1">LTC Demo Cases - 20221220</text>
<text x="516.60" y="236.90" font-size="20.20" fill="#ffffff" textLength="47.76" lengthAdjust="spacingAndGlyphs">Latest</text>
<text x="1956.70" y="223.50" font-size="16.28" fill="#ffffff" textLength="46.79" lengthAdjust="spacingAndGlyphs">Actions</text>
<text x="8.22" y="297.30" font-size="15.41" fill="#404040" textLength="133.38" lengthAdjust="spacingAndGlyphs" stroke="#fff" stroke-width="0.15">Projection ID: 33946</text>
<text x="1950.14" y="297.80" font-size="16.72" fill="#2e2e2e" textLength="73.16" lengthAdjust="spacingAndGlyphs" stroke="#f1fbea" stroke-width="0.2">Completed</text>
<text x="757.81" y="349.70" font-size="16.28" fill="#3c3c3c" textLength="115.94" lengthAdjust="spacingAndGlyphs" stroke="#fff" stroke-width="0.15">Projection Details</text>
<text x="908.83" y="349.70" font-size="16.28" fill="#3c3c3c" textLength="74.17" lengthAdjust="spacingAndGlyphs" stroke="#fff" stroke-width="0.15">Workbooks</text>
<text x="1017.54" y="349.70" font-size="16.28" fill="#3c3c3c" textLength="62.18" lengthAdjust="spacingAndGlyphs" stroke="#fff" stroke-width="0.15">Run Logs</text>
<text x="1113.65" y="349.70" font-size="16.28" fill="#3c3c3c" textLength="45.99" lengthAdjust="spacingAndGlyphs" stroke="#fff" stroke-width="0.15">Debug</text>
<text x="1993.07" y="349.50" font-size="15.99" fill="#f05a3c" textLength="37.41" lengthAdjust="spacingAndGlyphs">Share</text>
<text x="17.28" y="403.50" font-size="16.72" font-weight="bold" fill="#262626" textLength="87.63" lengthAdjust="spacingAndGlyphs" stroke="#efefef" stroke-width="0.25">Projection ID</text>
<text x="355.96" y="403.50" font-size="16.72" font-weight="bold" fill="#262626" textLength="75.43" lengthAdjust="spacingAndGlyphs" stroke="#efefef" stroke-width="0.25">Time Index</text>
<text x="693.97" y="403.50" font-size="16.72" font-weight="bold" fill="#262626" textLength="118.85" lengthAdjust="spacingAndGlyphs" stroke="#efefef" stroke-width="0.25">Scenario Number</text>
<text x="1032.06" y="403.50" font-size="16.72" font-weight="bold" fill="#262626" textLength="148.21" lengthAdjust="spacingAndGlyphs" stroke="#efefef" stroke-width="0.25">Model Point Record #</text>
<text x="1370.84" y="403.50" font-size="16.72" font-weight="bold" fill="#262626" textLength="104.60" lengthAdjust="spacingAndGlyphs" stroke="#efefef" stroke-width="0.25">Portfolio Name</text>
<text x="1709.05" y="403.50" font-size="16.72" font-weight="bold" fill="#262626" textLength="98.85" lengthAdjust="spacingAndGlyphs" stroke="#efefef" stroke-width="0.25">Product Name</text>
<text x="27.93" y="436.30" font-size="15.84" fill="#333333" textLength="42.69" lengthAdjust="spacingAndGlyphs">27633</text>
<text x="366.07" y="436.30" font-size="15.84" fill="#333333" textLength="8.81" lengthAdjust="spacingAndGlyphs">0</text>
<text x="535.12" y="436.30" font-size="15.84" fill="#333333" textLength="25.98" lengthAdjust="spacingAndGlyphs">240</text>
<text x="704.76" y="436.30" font-size="15.84" fill="#333333" textLength="6.26" lengthAdjust="spacingAndGlyphs">1</text>
<text x="1043.16" y="436.30" font-size="15.84" fill="#333333" textLength="6.26" lengthAdjust="spacingAndGlyphs">1</text>
<text x="1380.36" y="436.30" font-size="15.84" fill="#333333" textLength="112.04" lengthAdjust="spacingAndGlyphs">Inforce Portfolio</text>
<text x="1718.78" y="436.30" font-size="15.84" fill="#333333" textLength="108.94" lengthAdjust="spacingAndGlyphs">Long Term Care</text>
<text x="776.85" y="491.70" font-size="28.34" font-weight="bold" fill="#1f5a5c" textLength="488.01" lengthAdjust="spacingAndGlyphs" stroke="#efefef" stroke-width="0.4">US STATUTORY RESERVE ASSUMPTIONS</text>
<text x="930.60" y="533.10" font-size="26.89" fill="#2e6b6e" textLength="187.43" lengthAdjust="spacingAndGlyphs">Long Term Care</text>
<text x="169.79" y="595.60" font-size="20.35" font-weight="bold" fill="#3e4527" textLength="184.49" lengthAdjust="spacingAndGlyphs" stroke="#bdd4a8" stroke-width="0.35">Projection Start Date</text>
<text x="214.90" y="623.10" font-size="18.31" fill="#4b4f31" textLength="93.75" lengthAdjust="spacingAndGlyphs">12/31/2021</text>
<text x="681.14" y="595.60" font-size="20.35" font-weight="bold" fill="#2e4a4c" textLength="178.69" lengthAdjust="spacingAndGlyphs" stroke="#a9dddf" stroke-width="0.35">Annual Interest Rate</text>
<text x="746.32" y="623.10" font-size="18.31" fill="#3b5456" textLength="48.08" lengthAdjust="spacingAndGlyphs">3.58%</text>
<text x="1146.81" y="595.60" font-size="20.35" font-weight="bold" fill="#9a3e32" textLength="261.42" lengthAdjust="spacingAndGlyphs" stroke="#fcc3b5" stroke-width="0.35">Incidence Table - Facility Care</text>
<text x="1159.21" y="623.10" font-size="18.31" fill="#8e4a40" textLength="236.54" lengthAdjust="spacingAndGlyphs">LTC Incidence - Nursing Home</text>
<text x="1658.79" y="595.60" font-size="20.35" font-weight="bold" fill="#9a3e32" textLength="252.89" lengthAdjust="spacingAndGlyphs" stroke="#fcc3b5" stroke-width="0.35">Incidence Table - Home Care</text>
<text x="1680.24" y="623.10" font-size="18.31" fill="#8e4a40" textLength="210.53" lengthAdjust="spacingAndGlyphs">LTC Incidence - Home Care</text>
<text x="187.39" y="667.90" font-size="20.35" font-weight="bold" fill="#5d5326" textLength="149.27" lengthAdjust="spacingAndGlyphs" stroke="#fce6b1" stroke-width="0.35">Mortality - Active</text>
<text x="203.81" y="695.40" font-size="18.31" fill="#5d5530" textLength="116.55" lengthAdjust="spacingAndGlyphs">2012 IAM ANB</text>
<text x="669.31" y="667.90" font-size="20.35" font-weight="bold" fill="#5d5326" textLength="201.59" lengthAdjust="spacingAndGlyphs" stroke="#fce6b1" stroke-width="0.35">Mortality - Facility Care</text>
<text x="655.01" y="695.40" font-size="18.31" fill="#5d5530" textLength="229.87" lengthAdjust="spacingAndGlyphs">LTC Mortality - Disabled Lives</text>
<text x="1180.38" y="667.90" font-size="20.35" font-weight="bold" fill="#5d5326" textLength="194.29" lengthAdjust="spacingAndGlyphs" stroke="#fce6b1" stroke-width="0.35">Mortality - Home Care</text>
<text x="1161.61" y="695.40" font-size="18.31" fill="#5d5530" textLength="230.47" lengthAdjust="spacingAndGlyphs">LTC Mortality - Disabled Lives</text>
<text x="1696.52" y="667.90" font-size="20.35" font-weight="bold" fill="#3f3a40" textLength="177.50" lengthAdjust="spacingAndGlyphs" stroke="#c4bac3" stroke-width="0.35">Recovery Rate Table</text>
<text x="1732.57" y="695.40" font-size="18.31" fill="#4a444a" textLength="104.75" lengthAdjust="spacingAndGlyphs">LTC Recovery</text>
<text x="315.81" y="830.30" font-size="18.60" fill="#2e5e66" textLength="400.65" lengthAdjust="spacingAndGlyphs">Long Term Care Lives Projection by Status - 1st Life</text>
<rect x="294.6" y="1291" width="13.5" height="13.5" fill="#649b36"/>
<text x="315.50" y="1302.30" font-size="14.97" fill="#3f5f63" textLength="36.45" lengthAdjust="spacingAndGlyphs">Active</text>
<rect x="368.1" y="1291" width="13.5" height="13.5" fill="#3c5e6e"/>
<text x="386.65" y="1302.30" font-size="14.97" fill="#3f5f63" textLength="66.98" lengthAdjust="spacingAndGlyphs">Home Care</text>
<rect x="469.3" y="1291" width="13.5" height="13.5" fill="#d8a74a"/>
<text x="488.55" y="1302.30" font-size="14.97" fill="#3f5f63" textLength="72.76" lengthAdjust="spacingAndGlyphs">Facility Care</text>
<rect x="577.4" y="1291" width="13.5" height="13.5" fill="#924333"/>
<text x="596.25" y="1302.30" font-size="14.97" fill="#3f5f63" textLength="59.35" lengthAdjust="spacingAndGlyphs">Deceased</text>
<rect x="671.9" y="1291" width="13.5" height="13.5" fill="#fe7a52"/>
<text x="690.43" y="1302.30" font-size="14.97" fill="#3f5f63" textLength="44.06" lengthAdjust="spacingAndGlyphs">Lapsed</text>
<text x="1328.11" y="830.30" font-size="18.60" fill="#2e5e66" textLength="406.23" lengthAdjust="spacingAndGlyphs">Long Term Care Lives Projection by Status - 2nd Life</text>
<rect x="1310.6" y="1291" width="13.5" height="13.5" fill="#649b36"/>
<text x="1331.50" y="1302.30" font-size="14.97" fill="#3f5f63" textLength="36.45" lengthAdjust="spacingAndGlyphs">Active</text>
<rect x="1384.1" y="1291" width="13.5" height="13.5" fill="#3c5e6e"/>
<text x="1402.65" y="1302.30" font-size="14.97" fill="#3f5f63" textLength="66.98" lengthAdjust="spacingAndGlyphs">Home Care</text>
<rect x="1485.3" y="1291" width="13.5" height="13.5" fill="#d8a74a"/>
<text x="1504.55" y="1302.30" font-size="14.97" fill="#3f5f63" textLength="72.76" lengthAdjust="spacingAndGlyphs">Facility Care</text>
<rect x="1593.4" y="1291" width="13.5" height="13.5" fill="#924333"/>
<text x="1612.25" y="1302.30" font-size="14.97" fill="#3f5f63" textLength="59.35" lengthAdjust="spacingAndGlyphs">Deceased</text>
<rect x="1687.9" y="1291" width="13.5" height="13.5" fill="#fe7a52"/>
<text x="1706.43" y="1302.30" font-size="14.97" fill="#3f5f63" textLength="44.06" lengthAdjust="spacingAndGlyphs">Lapsed</text>
<text x="54.10" y="1436.40" font-size="14.97" font-weight="bold" fill="#222222" textLength="175.47" lengthAdjust="spacingAndGlyphs">US STAT Reserve Summary</text>
<text x="271.94" y="1436.40" font-size="14.97" fill="#333333" textLength="41.84" lengthAdjust="spacingAndGlyphs">Page 1</text>
<text x="1964.79" y="1436.30" font-size="14.53" font-weight="bold" fill="#ffffff" textLength="26.51" lengthAdjust="spacingAndGlyphs">Edit</text></svg>
<div id="frame"></div>
</body></html>
